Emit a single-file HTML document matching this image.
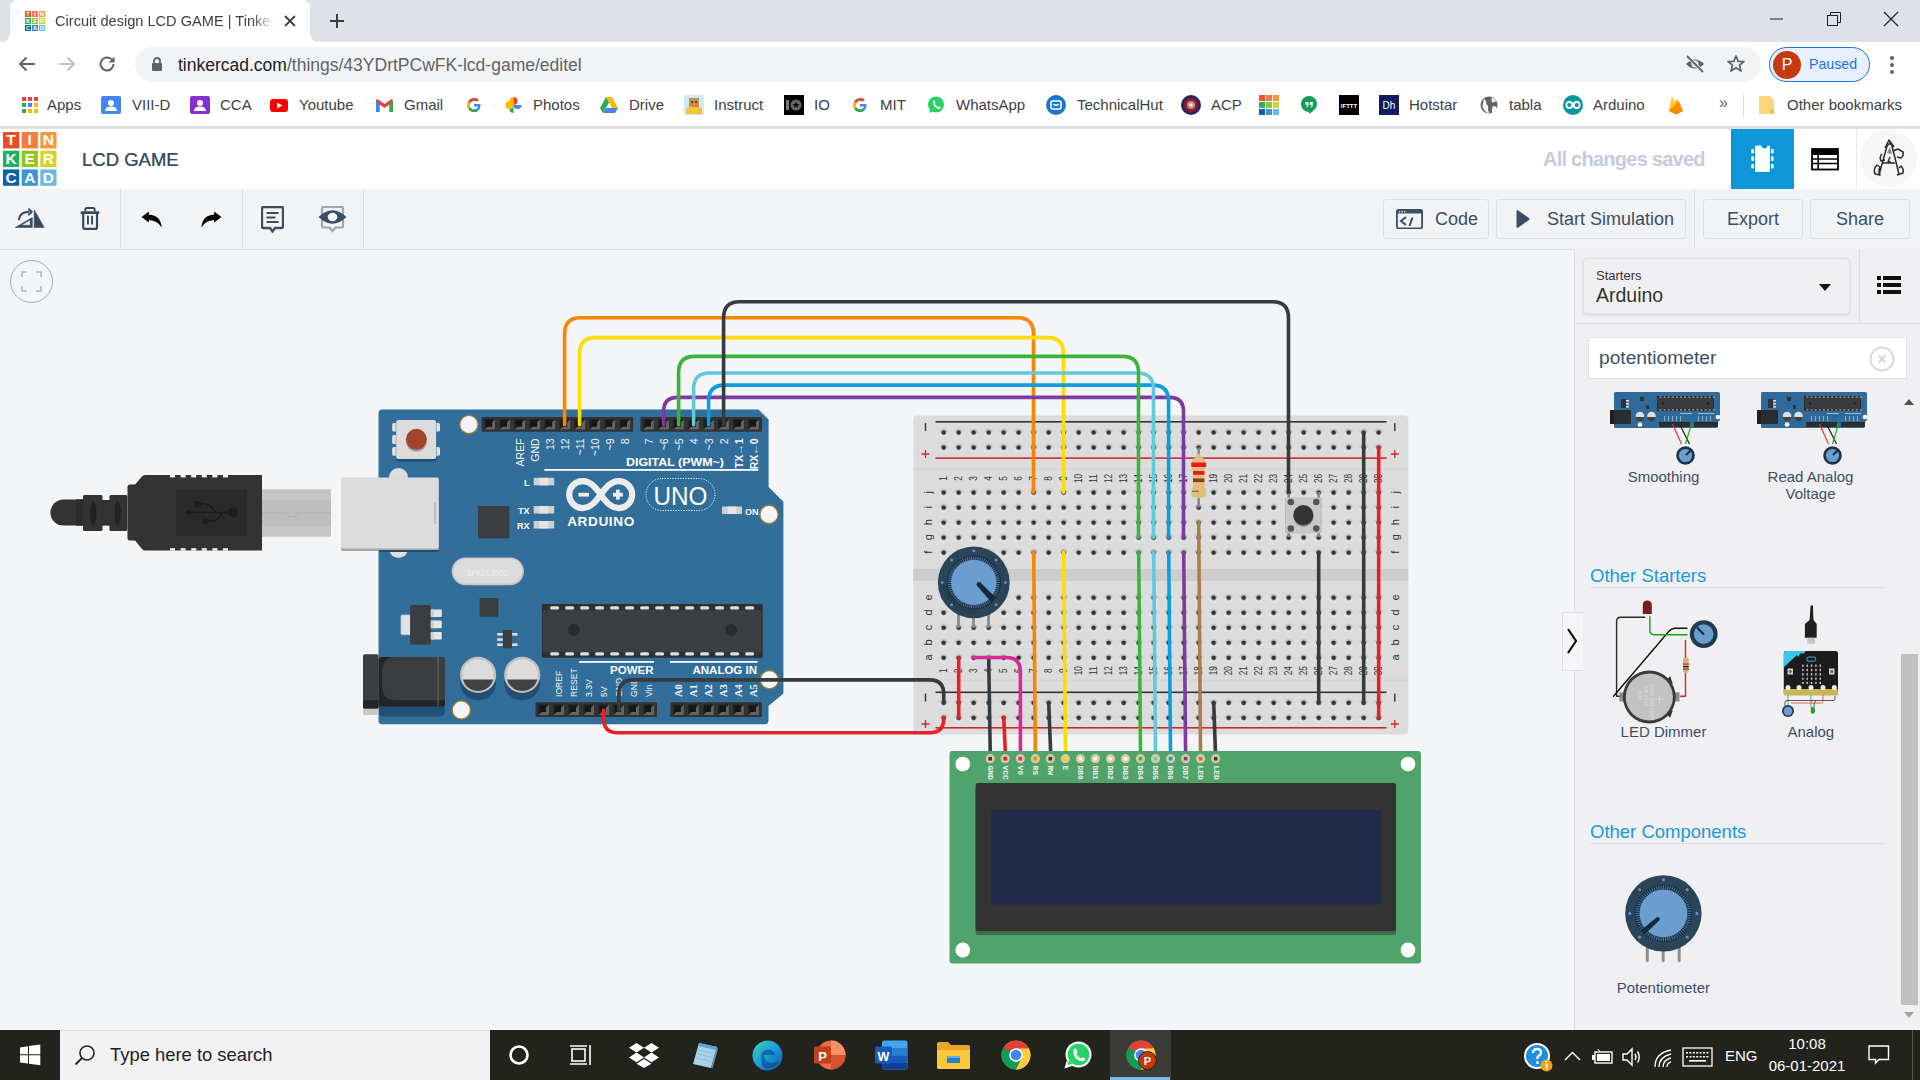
<!DOCTYPE html>
<html><head><meta charset="utf-8">
<style>
*{box-sizing:border-box}
html,body{margin:0;padding:0}
body{width:1920px;height:1080px;overflow:hidden;position:relative;font-family:"Liberation Sans",sans-serif;background:#f3f5f7;color:#3c4043}
.a{position:absolute}
.bm{position:absolute;top:86px;height:41px;display:flex;align-items:center;font-size:15px;color:#3c4043;white-space:nowrap}
.bm svg{margin-right:11px}
.tbtn{position:absolute;top:199px;height:40px;border:1px solid #dde0e4;border-radius:3px;background:#f2f3f5;font-size:18px;color:#3c4e63;display:flex;align-items:center;justify-content:center}
.sep{position:absolute;background:#dde1e6}
.lbl{position:absolute;font-size:15px;color:#3c4e63;text-align:center;white-space:nowrap}
.sh{position:absolute;font-size:18.5px;color:#1a9ad6;white-space:nowrap}
</style></head>
<body>
<!-- ===== Chrome tab strip ===== -->
<div class="a" style="left:0;top:0;width:1920px;height:42px;background:#dee1e6"></div>
<div class="a" style="left:10px;top:0;width:300px;height:42px;background:#fff;border-radius:8px 8px 0 0"></div>
<svg class="a" style="left:0;top:32px" width="330" height="10"><path d="M0 10 Q10 10 10 0 L10 10Z" fill="#fff"/><path d="M310 0 Q310 10 320 10 L310 10Z" fill="#fff"/></svg>
<svg class="a" style="left:25px;top:11px" width="20" height="20" viewBox="0 0 20 20"><rect x="0" y="0" width="6" height="6" fill="#f0502a"/><text x="3" y="5.2" font-size="5.5" font-weight="bold" fill="#fff" text-anchor="middle" font-family="Liberation Sans">T</text><rect x="7" y="0" width="6" height="6" fill="#f57b3b"/><text x="10" y="5.2" font-size="5.5" font-weight="bold" fill="#fff" text-anchor="middle" font-family="Liberation Sans">I</text><rect x="14" y="0" width="6" height="6" fill="#f8973e"/><text x="17" y="5.2" font-size="5.5" font-weight="bold" fill="#fff" text-anchor="middle" font-family="Liberation Sans">N</text><rect x="0" y="7" width="6" height="6" fill="#2bb35c"/><text x="3" y="12.2" font-size="5.5" font-weight="bold" fill="#fff" text-anchor="middle" font-family="Liberation Sans">K</text><rect x="7" y="7" width="6" height="6" fill="#8dc63f"/><text x="10" y="12.2" font-size="5.5" font-weight="bold" fill="#fff" text-anchor="middle" font-family="Liberation Sans">E</text><rect x="14" y="7" width="6" height="6" fill="#d0d437"/><text x="17" y="12.2" font-size="5.5" font-weight="bold" fill="#fff" text-anchor="middle" font-family="Liberation Sans">R</text><rect x="0" y="14" width="6" height="6" fill="#0c62ad"/><text x="3" y="19.2" font-size="5.5" font-weight="bold" fill="#fff" text-anchor="middle" font-family="Liberation Sans">C</text><rect x="7" y="14" width="6" height="6" fill="#3b95d1"/><text x="10" y="19.2" font-size="5.5" font-weight="bold" fill="#fff" text-anchor="middle" font-family="Liberation Sans">A</text><rect x="14" y="14" width="6" height="6" fill="#6ab7df"/><text x="17" y="19.2" font-size="5.5" font-weight="bold" fill="#fff" text-anchor="middle" font-family="Liberation Sans">D</text></svg>
<div class="a" style="left:55px;top:12.5px;font-size:14.6px;color:#3c4043;white-space:nowrap;width:219px;overflow:hidden;-webkit-mask-image:linear-gradient(90deg,#000 90%,transparent)">Circuit design LCD GAME | Tinkercad</div>
<svg class="a" style="left:283px;top:14px" width="14" height="14"><path d="M2 2L12 12M12 2L2 12" stroke="#3c4043" stroke-width="1.8"/></svg>
<svg class="a" style="left:329px;top:13px" width="16" height="16"><path d="M8 1V15M1 8H15" stroke="#3c4043" stroke-width="2"/></svg>
<!-- window controls -->
<svg class="a" style="left:1770px;top:12px" width="14" height="14"><path d="M0 7H13" stroke="#202124" stroke-width="1"/></svg>
<svg class="a" style="left:1826px;top:11px" width="16" height="16"><rect x="1.5" y="4.5" width="10" height="10" fill="none" stroke="#202124"/><path d="M4.5 4.5V1.5H14.5V11.5H11.5" fill="none" stroke="#202124"/></svg>
<svg class="a" style="left:1883px;top:11px" width="16" height="16"><path d="M1 1L15 15M15 1L1 15" stroke="#202124" stroke-width="1.2"/></svg>

<!-- ===== Chrome toolbar ===== -->
<div class="a" style="left:0;top:42px;width:1920px;height:44px;background:#fff"></div>
<svg class="a" style="left:17px;top:54px" width="20" height="20" viewBox="0 0 20 20"><path d="M18 10H3M9.5 3.5L3 10L9.5 16.5" fill="none" stroke="#5f6368" stroke-width="2"/></svg>
<svg class="a" style="left:57px;top:54px" width="20" height="20" viewBox="0 0 20 20"><path d="M2 10H17M10.5 3.5L17 10L10.5 16.5" fill="none" stroke="#bdc1c6" stroke-width="2"/></svg>
<svg class="a" style="left:97px;top:54px" width="20" height="20" viewBox="0 0 20 20"><path d="M16.5 10A6.5 6.5 0 1 1 14.6 5.4" fill="none" stroke="#5f6368" stroke-width="2"/><path d="M17.5 2.5V8.5H11.5Z" fill="#5f6368"/></svg>
<div class="a" style="left:135px;top:47px;width:1626px;height:35px;background:#f1f3f4;border-radius:18px"></div>
<svg class="a" style="left:151px;top:57px" width="12" height="15" viewBox="0 0 12 15"><path d="M3 6V4A3 3 0 0 1 9 4V6" fill="none" stroke="#5f6368" stroke-width="1.8"/><rect x="1" y="6" width="10" height="8" rx="1" fill="#5f6368"/></svg>
<div class="a" style="left:178px;top:55px;font-size:17.5px;white-space:nowrap;color:#202124">tinkercad.com<span style="color:#5f6368">/things/43YDrtPCwFK-lcd-game/editel</span></div>
<svg class="a" style="left:1684px;top:54px" width="22" height="20" viewBox="0 0 22 20"><path d="M2 10Q11 1 20 10Q11 19 2 10Z" fill="#5f6368"/><circle cx="11" cy="10" r="3.5" fill="#f1f3f4"/><circle cx="11" cy="10" r="2" fill="#5f6368"/><path d="M3 2L19 18" stroke="#f1f3f4" stroke-width="3.5"/><path d="M3 2L19 18" stroke="#5f6368" stroke-width="1.8"/></svg>
<svg class="a" style="left:1726px;top:54px" width="20" height="20" viewBox="0 0 20 20"><path d="M10 2L12.2 7.3L18 7.6L13.5 11.2L15 17L10 13.8L5 17L6.5 11.2L2 7.6L7.8 7.3Z" fill="none" stroke="#5f6368" stroke-width="1.7" stroke-linejoin="round"/></svg>
<div class="a" style="left:1769px;top:47px;width:101px;height:35px;border:1.5px solid #1a73e8;border-radius:18px;background:#e8f0fe"></div>
<div class="a" style="left:1773px;top:51px;width:28px;height:28px;border-radius:50%;background:#c5390f;color:#fff;font-size:16px;text-align:center;line-height:28px">P</div>
<div class="a" style="left:1809px;top:56px;font-size:14.2px;color:#1a73e8">Paused</div>
<svg class="a" style="left:1886px;top:55px" width="12" height="20"><circle cx="6" cy="3" r="2" fill="#5f6368"/><circle cx="6" cy="10" r="2" fill="#5f6368"/><circle cx="6" cy="17" r="2" fill="#5f6368"/></svg>

<!-- ===== Bookmarks bar ===== -->
<div class="a" style="left:0;top:86px;width:1920px;height:41px;background:#fff;border-bottom:1px solid #dadce0"></div>
<svg class="a" style="left:20px;top:95px" width="20" height="20" viewBox="0 0 20 20"><g><rect x="2" y="2" width="4" height="4" fill="#ea4335"/><rect x="8" y="2" width="4" height="4" fill="#ea4335"/><rect x="14" y="2" width="4" height="4" fill="#ea4335"/><rect x="2" y="8" width="4" height="4" fill="#34a853"/><rect x="8" y="8" width="4" height="4" fill="#4285f4"/><rect x="14" y="8" width="4" height="4" fill="#fbbc04"/><rect x="2" y="14" width="4" height="4" fill="#34a853"/><rect x="8" y="14" width="4" height="4" fill="#fbbc04"/><rect x="14" y="14" width="4" height="4" fill="#fbbc04"/></g></svg>
<div class="a" style="left:47px;top:96px;font-size:15px;color:#3c4043;white-space:nowrap">Apps</div>
<svg class="a" style="left:101px;top:95px" width="20" height="20" viewBox="0 0 20 20"><rect x="0" y="1" width="20" height="18" rx="2" fill="#4285f4"/><circle cx="10" cy="8" r="3" fill="#fff"/><path d="M4 16Q4 11.5 10 11.5Q16 11.5 16 16Z" fill="#fff"/></svg>
<div class="a" style="left:132px;top:96px;font-size:15px;color:#3c4043;white-space:nowrap">VIII-D</div>
<svg class="a" style="left:190px;top:95px" width="20" height="20" viewBox="0 0 20 20"><rect x="0" y="1" width="20" height="18" rx="2" fill="#8430ce"/><circle cx="10" cy="8" r="3" fill="#fff"/><path d="M4 16Q4 11.5 10 11.5Q16 11.5 16 16Z" fill="#fff"/></svg>
<div class="a" style="left:220px;top:96px;font-size:15px;color:#3c4043;white-space:nowrap">CCA</div>
<svg class="a" style="left:270px;top:95px" width="20" height="20" viewBox="0 0 20 20"><rect x="0" y="4" width="18" height="13" rx="3" fill="#ff0000"/><path d="M7 7.5L12.5 10.5L7 13.5Z" fill="#fff"/></svg>
<div class="a" style="left:299px;top:96px;font-size:15px;color:#3c4043;white-space:nowrap">Youtube</div>
<svg class="a" style="left:375px;top:95px" width="20" height="20" viewBox="0 0 20 20"><path d="M1 5V17H4.5V9.5L9.5 13L14.5 9.5V17H18V5L16.5 4L9.5 9L2.5 4Z" fill="#ea4335"/><path d="M1 5V17H4.5V9.5Z" fill="#4285f4"/><path d="M14.5 9.5V17H18V5Z" fill="#34a853"/></svg>
<div class="a" style="left:404px;top:96px;font-size:15px;color:#3c4043;white-space:nowrap">Gmail</div>
<svg class="a" style="left:465px;top:95px" width="20" height="20" viewBox="0 0 20 20"><path d="M15.5 9H9V11.5H13Q12.4 14.5 9 14.5A4.5 4.5 0 1 1 12 6.6L13.8 4.8A7 7 0 1 0 9 17Q15.7 17 15.5 9Z" fill="#4285f4"/><path d="M3.2 6.5L5.4 8.1A4.5 4.5 0 0 1 12 6.6L13.8 4.8A7 7 0 0 0 3.2 6.5Z" fill="#ea4335"/><path d="M3.2 6.5A7 7 0 0 0 3.3 14.1L5.4 12.4A4.5 4.5 0 0 1 5.4 8.1Z" fill="#fbbc04"/><path d="M3.3 14.1A7 7 0 0 0 13.5 15.5L11.6 13.8A4.5 4.5 0 0 1 5.4 12.4Z" fill="#34a853"/></svg>
<svg class="a" style="left:504px;top:95px" width="20" height="20" viewBox="0 0 20 20"><path d="M9.5 10V2A4 4 0 0 1 9.5 10Z" fill="#ea4335"/><path d="M9.5 10H1.5A4 4 0 0 1 9.5 10Z" fill="#fbbc04"/><path d="M9.5 10V18A4 4 0 0 1 9.5 10Z" fill="#34a853"/><path d="M9.5 10H17.5A4 4 0 0 1 9.5 10Z" fill="#4285f4"/><path d="M9.5 10L9.5 2A4 4 0 0 0 9.5 10ZM9.5 10H1.5A4 4 0 0 0 9.5 10Z" fill="#fbbc04"/></svg>
<div class="a" style="left:533px;top:96px;font-size:15px;color:#3c4043;white-space:nowrap">Photos</div>
<svg class="a" style="left:600px;top:95px" width="20" height="20" viewBox="0 0 20 20"><path d="M6 2H12L18 13H12Z" fill="#fbbc04"/><path d="M6 2L0 13L3 18L9 7.5Z" fill="#34a853"/><path d="M3 18H15L18 13H6Z" fill="#4285f4"/></svg>
<div class="a" style="left:629px;top:96px;font-size:15px;color:#3c4043;white-space:nowrap">Drive</div>
<svg class="a" style="left:684px;top:95px" width="20" height="20" viewBox="0 0 20 20"><rect x="0" y="0" width="20" height="20" rx="2" fill="#cfe8f5"/><path d="M2 15Q2 12 6 12H14Q18 12 18 15V19H2Z" fill="#f9c23c"/><rect x="5" y="3" width="10" height="9" fill="#c98a4b"/><circle cx="8" cy="7" r="1" fill="#333"/><circle cx="12" cy="7" r="1" fill="#333"/></svg>
<div class="a" style="left:714px;top:96px;font-size:15px;color:#3c4043;white-space:nowrap">Instruct</div>
<svg class="a" style="left:784px;top:95px" width="20" height="20" viewBox="0 0 20 20"><rect x="0" y="0" width="20" height="20" fill="#000"/><circle cx="12" cy="10" r="5.5" fill="#666"/><path d="M12 6.5L13 9H15.5L13.5 10.5L14.3 13L12 11.5L9.7 13L10.5 10.5L8.5 9H11Z" fill="#000"/><rect x="2" y="5" width="3" height="10" fill="#777"/></svg>
<div class="a" style="left:814px;top:96px;font-size:15px;color:#3c4043;white-space:nowrap">IO</div>
<svg class="a" style="left:851px;top:95px" width="20" height="20" viewBox="0 0 20 20"><path d="M15.5 9H9V11.5H13Q12.4 14.5 9 14.5A4.5 4.5 0 1 1 12 6.6L13.8 4.8A7 7 0 1 0 9 17Q15.7 17 15.5 9Z" fill="#4285f4"/><path d="M3.2 6.5L5.4 8.1A4.5 4.5 0 0 1 12 6.6L13.8 4.8A7 7 0 0 0 3.2 6.5Z" fill="#ea4335"/><path d="M3.2 6.5A7 7 0 0 0 3.3 14.1L5.4 12.4A4.5 4.5 0 0 1 5.4 8.1Z" fill="#fbbc04"/><path d="M3.3 14.1A7 7 0 0 0 13.5 15.5L11.6 13.8A4.5 4.5 0 0 1 5.4 12.4Z" fill="#34a853"/></svg>
<div class="a" style="left:880px;top:96px;font-size:15px;color:#3c4043;white-space:nowrap">MIT</div>
<svg class="a" style="left:927px;top:95px" width="20" height="20" viewBox="0 0 20 20"><circle cx="9" cy="9.5" r="8" fill="#25d366"/><path d="M2 18L3.2 13.5L6 16Z" fill="#25d366"/><path d="M6 6Q6.5 5 7.5 5.5L8.5 7.5Q8 8.5 7.8 9Q9 11 11 12Q11.6 11.6 12.2 11.2L13.8 12.3Q13.8 13.6 12.5 14Q10 14 8 12Q6 10 6 6Z" fill="#fff"/></svg>
<div class="a" style="left:956px;top:96px;font-size:15px;color:#3c4043;white-space:nowrap">WhatsApp</div>
<svg class="a" style="left:1046px;top:95px" width="20" height="20" viewBox="0 0 20 20"><circle cx="10" cy="10" r="10" fill="#1976d2"/><rect x="5" y="6" width="10" height="8" rx="1.5" fill="none" stroke="#fff" stroke-width="1.6"/><path d="M7.5 9Q10 11.5 12.5 9" fill="none" stroke="#fff" stroke-width="1.5"/></svg>
<div class="a" style="left:1077px;top:96px;font-size:15px;color:#3c4043;white-space:nowrap">TechnicalHut</div>
<svg class="a" style="left:1181px;top:95px" width="20" height="20" viewBox="0 0 20 20"><circle cx="10" cy="10" r="10" fill="#2a2560"/><circle cx="10" cy="10" r="7" fill="#8b1d2c"/><circle cx="10" cy="10" r="4" fill="#c9897e"/><circle cx="10" cy="10" r="1.8" fill="#eee"/></svg>
<div class="a" style="left:1211px;top:96px;font-size:15px;color:#3c4043;white-space:nowrap">ACP</div>
<svg class="a" style="left:1259px;top:95px" width="20" height="20" viewBox="0 0 20 20"><rect x="0" y="0" width="6" height="6" fill="#f0532b"/><rect x="7" y="0" width="6" height="6" fill="#f47b3c"/><rect x="14" y="0" width="6" height="6" fill="#f79a3e"/><rect x="0" y="7" width="6" height="6" fill="#2fb25b"/><rect x="7" y="7" width="6" height="6" fill="#8cc63f"/><rect x="14" y="7" width="6" height="6" fill="#cdd43a"/><rect x="0" y="14" width="6" height="6" fill="#0f62ae"/><rect x="7" y="14" width="6" height="6" fill="#3c96d2"/><rect x="14" y="14" width="6" height="6" fill="#6cb8e0"/></svg>
<svg class="a" style="left:1300px;top:95px" width="20" height="20" viewBox="0 0 20 20"><path d="M9 1A8 8 0 0 1 17 9Q17 14 9 19V17A8 8 0 0 1 9 1Z" fill="#0f9d58"/><path d="M5.5 7H8.5V10Q8.5 12 6.5 12.5V11.2Q7.5 10.8 7.5 10H5.5ZM9.8 7H12.8V10Q12.8 12 10.8 12.5V11.2Q11.8 10.8 11.8 10H9.8Z" fill="#fff"/></svg>
<svg class="a" style="left:1339px;top:95px" width="20" height="20" viewBox="0 0 20 20"><rect x="0" y="0" width="20" height="20" fill="#000"/><text x="10" y="12.5" font-size="6" font-weight="bold" fill="#fff" text-anchor="middle" font-family="Liberation Sans">IFTTT</text></svg>
<svg class="a" style="left:1379px;top:95px" width="20" height="20" viewBox="0 0 20 20"><rect x="0" y="0" width="20" height="20" fill="#0f1c5c"/><text x="10" y="14" font-size="10" fill="#fff" text-anchor="middle" font-family="Liberation Sans">Dh</text></svg>
<div class="a" style="left:1409px;top:96px;font-size:15px;color:#3c4043;white-space:nowrap">Hotstar</div>
<svg class="a" style="left:1480px;top:95px" width="20" height="20" viewBox="0 0 20 20"><circle cx="9" cy="10" r="8.5" fill="#5f6368"/><path d="M4 4Q7 6 6 9Q9 11 8 14L9 18.5Q5 17 2.5 12Q3 7 4 4ZM12 2.5Q15 4 16 6Q14 8 12 7Q11 5 12 2.5ZM13 11Q16 11 17 13Q15 17 12 18Q11 14 13 11Z" fill="#fff"/></svg>
<div class="a" style="left:1509px;top:96px;font-size:15px;color:#3c4043;white-space:nowrap">tabla</div>
<svg class="a" style="left:1563px;top:95px" width="20" height="20" viewBox="0 0 20 20"><circle cx="10" cy="10" r="10" fill="#00979c"/><circle cx="6.3" cy="10" r="3" fill="none" stroke="#fff" stroke-width="1.8"/><circle cx="13.7" cy="10" r="3" fill="none" stroke="#fff" stroke-width="1.8"/></svg>
<div class="a" style="left:1593px;top:96px;font-size:15px;color:#3c4043;white-space:nowrap">Arduino</div>
<svg class="a" style="left:1668px;top:95px" width="20" height="20" viewBox="0 0 20 20"><path d="M1 16L4 2L7 8L9 4L15 16L8 19.5Z" fill="#ffa000"/><path d="M1 16L4 2L8 9Z" fill="#ffca28"/><path d="M1 16L11 6L15 16L8 19.5Z" fill="#f57c00" opacity="0.6"/></svg>
<div class="a" style="left:1719px;top:94px;font-size:16px;color:#5f6368">&raquo;</div>
<div class="a" style="left:1743px;top:94px;width:1px;height:24px;background:#dadce0"></div>
<svg class="a" style="left:1758px;top:95px" width="18" height="20" viewBox="0 0 18 20"><path d="M1 1H12L16 5V19H1Z" fill="#fbd77a"/><path d="M12 14H16V19H12Z" fill="#f1c04f"/></svg>
<div class="a" style="left:1787px;top:96px;font-size:15px;color:#3c4043;white-space:nowrap">Other bookmarks</div>

<!-- ===== Tinkercad header ===== -->
<div class="a" style="left:0;top:127px;width:1920px;height:1px;background:#dcdfe3"></div><div class="a" style="left:0;top:128px;width:1920px;height:1px;background:#e4e6e9"></div>
<div class="a" style="left:0;top:129px;width:1920px;height:60px;background:#fff;box-shadow:0 1px 3px rgba(0,0,0,0.08)"></div>
<svg class="a" style="left:3px;top:132px" width="54" height="54" viewBox="0 0 54 54"><rect x="0.00" y="0.00" width="16.2" height="16.4" fill="#f04a24"/><text x="8.10" y="13.30" font-size="15.5" font-weight="bold" fill="#fff" text-anchor="middle" font-family="Liberation Sans">T</text><rect x="18.65" y="0.00" width="16.2" height="16.4" fill="#f87a3c"/><text x="26.75" y="13.30" font-size="15.5" font-weight="bold" fill="#fff" text-anchor="middle" font-family="Liberation Sans">I</text><rect x="37.30" y="0.00" width="16.2" height="16.4" fill="#f9973a"/><text x="45.40" y="13.30" font-size="15.5" font-weight="bold" fill="#fff" text-anchor="middle" font-family="Liberation Sans">N</text><rect x="0.00" y="18.70" width="16.2" height="16.4" fill="#20b25a"/><text x="8.10" y="32.00" font-size="15.5" font-weight="bold" fill="#fff" text-anchor="middle" font-family="Liberation Sans">K</text><rect x="18.65" y="18.70" width="16.2" height="16.4" fill="#8ec813"/><text x="26.75" y="32.00" font-size="15.5" font-weight="bold" fill="#fff" text-anchor="middle" font-family="Liberation Sans">E</text><rect x="37.30" y="18.70" width="16.2" height="16.4" fill="#d3d42a"/><text x="45.40" y="32.00" font-size="15.5" font-weight="bold" fill="#fff" text-anchor="middle" font-family="Liberation Sans">R</text><rect x="0.00" y="37.40" width="16.2" height="16.4" fill="#0b5fb0"/><text x="8.10" y="50.70" font-size="15.5" font-weight="bold" fill="#fff" text-anchor="middle" font-family="Liberation Sans">C</text><rect x="18.65" y="37.40" width="16.2" height="16.4" fill="#3d96d0"/><text x="26.75" y="50.70" font-size="15.5" font-weight="bold" fill="#fff" text-anchor="middle" font-family="Liberation Sans">A</text><rect x="37.30" y="37.40" width="16.2" height="16.4" fill="#6cb8de"/><text x="45.40" y="50.70" font-size="15.5" font-weight="bold" fill="#fff" text-anchor="middle" font-family="Liberation Sans">D</text></svg><div class="a" style="left:82px;top:149px;font-size:18.5px;color:#3c4e63">LCD GAME</div>
<div class="a" style="left:82px;top:149px;font-size:18.5px;color:#3c4e63">LCD GAME</div>
<div class="a" style="left:1543px;top:148px;font-size:20px;font-weight:bold;color:#c3ccd8;letter-spacing:-0.75px">All changes saved</div>
<div class="a" style="left:1731px;top:129px;width:63px;height:60px;background:#0d96d8"></div>
<div class="a" style="left:1856px;top:129px;width:1px;height:60px;background:#e6e8eb"></div>
<svg class="a" style="left:1750px;top:145px" width="25" height="28" viewBox="0 0 25 28"><path d="M7.5 0.5H11.5A3 3 0 0 0 17.5 0.5H18.5Q20 0.5 20 2V25.5Q20 27 18.5 27H6.5Q5 27 5 25.5V2Q5 0.5 6.5 0.5Z" fill="#fff"/><g fill="#fff"><rect x="1.3" y="4" width="2.6" height="4.6" rx="0.8"/><rect x="1.3" y="11.3" width="2.6" height="4.6" rx="0.8"/><rect x="1.3" y="19" width="2.6" height="4.6" rx="0.8"/><rect x="21" y="4" width="2.6" height="4.6" rx="0.8"/><rect x="21" y="11.3" width="2.6" height="4.6" rx="0.8"/><rect x="21" y="19" width="2.6" height="4.6" rx="0.8"/></g></svg>
<svg class="a" style="left:1811px;top:148px" width="28" height="23" viewBox="0 0 28 23"><rect x="1" y="1" width="26" height="20.5" fill="none" stroke="#000" stroke-width="1.8"/><rect x="1" y="1" width="26" height="6" fill="#000"/><path d="M1 11H27M1 15.5H27M7.2 7V21.5" stroke="#000" stroke-width="1.6"/></svg>
<div class="a" style="left:1860px;top:130px;width:57px;height:57px;border-radius:50%;background:#f6f6f6"></div>
<svg class="a" style="left:1870px;top:139px" width="38" height="39" viewBox="0 0 38 39"><g fill="none" stroke="#2a2a2a" stroke-width="1.5" stroke-linejoin="round"><path d="M9 36L17 7L20 4L22 7L29 35M13 24H25"/><path d="M5 35Q3 30 7 26L10 28Q8 32 10 36Z"/><path d="M27 36L33 34Q34 30 31 27L29 29"/><path d="M23 12L28 10L33 13Q34 17 31 19L27 18"/><path d="M12 15Q9 18 11 22L15 21M20 18L18 23H21"/><path d="M15 9L19 1L24 8"/></g><path d="M17 14L20 8L22 15Z" fill="#888"/></svg>

<!-- ===== Tinkercad toolbar ===== -->
<div class="a" style="left:0;top:189px;width:1920px;height:61px;background:#f2f3f5;border-bottom:1px solid #dfe2e6"></div>
<div class="sep" style="left:120px;top:189px;width:1px;height:60px"></div>
<div class="sep" style="left:242px;top:189px;width:1px;height:60px"></div>
<div class="sep" style="left:363px;top:189px;width:1px;height:60px"></div>
<div class="sep" style="left:1694px;top:189px;width:1px;height:60px"></div>
<div class="tbtn" style="left:1383px;width:106px"></div>
<div class="a" style="left:1435px;top:209px;font-size:18px;color:#3c4e63">Code</div>
<div class="tbtn" style="left:1496px;width:190px"></div>
<div class="a" style="left:1547px;top:209px;font-size:18px;color:#3c4e63">Start Simulation</div>
<div class="tbtn" style="left:1703px;width:100px">Export</div>
<div class="tbtn" style="left:1810px;width:100px">Share</div>

<svg class="a" style="left:0;top:200px" width="110" height="40" viewBox="0 200 110 40"><path d="M15.3 227.4L32.3 217.6V227.4ZM21 225.3H30.2V220Z" fill="#34495f" fill-rule="evenodd" stroke="#34495f" stroke-width="0.6" stroke-linejoin="round"/><path d="M34.2 209.9V227.4H44.2Z" fill="#34495f" stroke="#34495f" stroke-width="0.6" stroke-linejoin="round"/><path d="M19 219.5Q19.5 212.5 28.5 211.7" fill="none" stroke="#34495f" stroke-width="2" stroke-linecap="round"/><path d="M29 209.3L31.7 211.8L28.8 214.4" fill="none" stroke="#34495f" stroke-width="2" stroke-linecap="round" stroke-linejoin="round"/>
<path d="M85.3 211.3V209.6Q85.3 208 87 208H93Q94.7 208 94.7 209.6V211.3" fill="none" stroke="#34495f" stroke-width="1.9"/><rect x="80.6" y="211.2" width="18.8" height="2.8" rx="1" fill="#34495f"/><path d="M83.2 213.8V227.2Q83.2 228.9 85 228.9H95.2Q97 228.9 97 227.2V213.8" fill="none" stroke="#34495f" stroke-width="2.2"/><rect x="87" y="215.4" width="1.9" height="9.2" rx="0.9" fill="#34495f"/><rect x="91.1" y="215.4" width="1.9" height="9.2" rx="0.9" fill="#34495f"/></svg>
<svg class="a" style="left:141px;top:211px" width="21" height="17" viewBox="0 0 21 17"><path d="M0.5 6L8 0.5V3.8Q20 4.5 20.5 16.5Q17 9.5 8 9V11.5Z" fill="#000"/></svg>
<svg class="a" style="left:201px;top:211px" width="21" height="17" viewBox="0 0 21 17"><path d="M20.5 6L13 0.5V3.8Q1 4.5 0.5 16.5Q4 9.5 13 9V11.5Z" fill="#000"/></svg>
<svg class="a" style="left:261px;top:206px" width="23" height="27" viewBox="0 0 23 27"><path d="M2.5 1H20.5Q22 1 22 2.5V20.5Q22 22 20.5 22H14L11.5 25.5L9 22H2.5Q1 22 1 20.5V2.5Q1 1 2.5 1Z" fill="none" stroke="#3c4e63" stroke-width="2.3"/><rect x="5.5" y="6" width="12" height="2" fill="#3c4e63"/><rect x="5.5" y="10.5" width="9" height="2" fill="#3c4e63"/><rect x="5.5" y="15" width="12" height="2" fill="#3c4e63"/></svg>
<svg class="a" style="left:318px;top:206px" width="29" height="27" viewBox="0 0 29 27"><path d="M5.5 1H23.5Q25 1 25 2.5V20Q25 21.5 23.5 21.5H17.5L14.5 25L11.5 21.5H5.5Q4 21.5 4 20V2.5Q4 1 5.5 1Z" fill="none" stroke="#9ba7b4" stroke-width="2.2"/><path d="M0.5 11Q14.5 -2.5 28.5 11Q14.5 24.5 0.5 11Z" fill="#3c4e63"/><ellipse cx="14.5" cy="11" rx="4.8" ry="4.2" fill="#f2f3f5"/></svg>
<svg class="a" style="left:1396px;top:209px" width="27" height="20" viewBox="0 0 27 20"><rect x="0.9" y="0.9" width="25.2" height="18.4" rx="1.5" fill="none" stroke="#3c4e63" stroke-width="1.8"/><rect x="0.9" y="0.9" width="25.2" height="3.6" fill="#3c4e63"/><circle cx="3.6" cy="2.7" r="0.8" fill="#f2f3f5"/><circle cx="6.2" cy="2.7" r="0.8" fill="#f2f3f5"/><circle cx="8.8" cy="2.7" r="0.8" fill="#f2f3f5"/><path d="M10 8L5 12L10 16M16.5 8.5L13.5 17" fill="none" stroke="#3c4e63" stroke-width="2"/></svg>
<svg class="a" style="left:1515px;top:209px" width="16" height="20" viewBox="0 0 16 20"><path d="M1.5 2.5Q1.5 0.5 3.3 1.6L14 9Q15 10 14 11L3.3 18.4Q1.5 19.5 1.5 17.5Z" fill="#3c4e63"/></svg>
<svg class="a" style="left:0;top:249px" width="1574" height="781" viewBox="0 249 1574 781"><circle cx="31.5" cy="281.5" r="21" fill="none" stroke="#a8acb1" stroke-width="1"/>
<path d="M22 277V272H27M36 272H41V277M41 286V291H36M27 291H22V286" fill="none" stroke="#b4b8bd" stroke-width="1.6"/>
<path d="M63.5 499.4H83V525.6H63.5A13.1 13.1 0 0 1 63.5 499.4Z" fill="#333"/><rect x="76" y="499.4" width="7" height="26.2" fill="#2c2c2c"/>
<rect x="83" y="495" width="19.5" height="36" rx="1.5" fill="#333"/><rect x="109.4" y="495" width="18" height="36" rx="1.5" fill="#333"/>
<rect x="102" y="500" width="8" height="25.6" fill="#2e2e2e"/><rect x="102" y="503" width="8" height="19" fill="#333"/>
<ellipse cx="93.3" cy="513" rx="3.2" ry="12" fill="#222"/><ellipse cx="117.7" cy="513" rx="3.2" ry="12" fill="#222"/>
<path d="M127.5 487Q127.5 484.5 130 484.5H135L142 476.5Q143.5 475 145 475H262V550.6H145Q143.5 550.6 142 549L135 540.5H130Q127.5 540.5 127.5 538Z" fill="#333"/>
<rect x="170.0" y="475" width="5" height="2.4" fill="#f3f5f7"/><rect x="170.0" y="548.2" width="5" height="2.4" fill="#f3f5f7"/>
<rect x="180.6" y="475" width="5" height="2.4" fill="#f3f5f7"/><rect x="180.6" y="548.2" width="5" height="2.4" fill="#f3f5f7"/>
<rect x="191.2" y="475" width="5" height="2.4" fill="#f3f5f7"/><rect x="191.2" y="548.2" width="5" height="2.4" fill="#f3f5f7"/>
<rect x="201.8" y="475" width="5" height="2.4" fill="#f3f5f7"/><rect x="201.8" y="548.2" width="5" height="2.4" fill="#f3f5f7"/>
<rect x="212.4" y="475" width="5" height="2.4" fill="#f3f5f7"/><rect x="212.4" y="548.2" width="5" height="2.4" fill="#f3f5f7"/>
<rect x="223.0" y="475" width="5" height="2.4" fill="#f3f5f7"/><rect x="223.0" y="548.2" width="5" height="2.4" fill="#f3f5f7"/>
<rect x="176" y="490" width="71" height="46" fill="#2a2a2a"/>
<g fill="#1c1c1c" stroke="#1c1c1c"><path d="M189 512.5H232" stroke-width="1.7" fill="none"/><path d="M184.4 512.5L190.6 509.6V515.4Z" stroke="none"/><circle cx="232.7" cy="512.5" r="5" stroke="none"/><path d="M215.5 512.5Q210 503.8 205 503.8H199" fill="none" stroke-width="1.7"/><rect x="195" y="501.2" width="6.2" height="6.2" stroke="none"/><path d="M222.5 512.5Q217 521.2 212 521.2H205" fill="none" stroke-width="1.7"/><circle cx="205.6" cy="521.2" r="3.1" stroke="none"/></g>
<rect x="262" y="489.2" width="69" height="47.5" rx="1" fill="#c6c6c6"/><rect x="262" y="499.6" width="69" height="26.4" fill="#bebebe"/>
<path d="M262 513H287.7L288.6 516.5H295.7L296.6 513H331" fill="none" stroke="#acacac" stroke-width="0.9"/>
<path d="M382 409.5H758.5L768.6 419.5V487L783.4 501.7V693.5L768.5 706V720.5Q768.5 724.2 764.5 724.2H382Q378.5 724.2 378.5 720.5V413Q378.5 409.5 382 409.5Z" fill="#316e9a"/>
<rect x="389" y="468" width="19" height="20" rx="9.5" fill="#dedede"/><rect x="389" y="538" width="19" height="20" rx="9.5" fill="#dedede"/>
<rect x="341" y="479" width="97.7" height="72" rx="1.5" fill="#aaaaaa"/><rect x="379" y="550" width="59.7" height="2" fill="#234f74"/>
<rect x="341" y="477.6" width="97.7" height="71" rx="1.5" fill="#dcdcdc"/>
<rect x="434.5" y="502" width="1" height="22" fill="#9a9a9a"/>
<rect x="392.2" y="423" width="5" height="8.6" rx="1.6" fill="#e4e2de"/>
<rect x="392.2" y="435" width="5" height="9.0" rx="1.6" fill="#e4e2de"/>
<rect x="392.2" y="447.1" width="5" height="8.6" rx="1.6" fill="#e4e2de"/>
<rect x="435" y="423" width="5" height="8.6" rx="1.6" fill="#e4e2de"/>
<rect x="435" y="447.1" width="5" height="8.6" rx="1.6" fill="#e4e2de"/>
<rect x="396.2" y="421.5" width="39.9" height="40" rx="2.5" fill="#234d70"/>
<rect x="395.8" y="420" width="40.6" height="38.9" rx="2.5" fill="#316e9a"/><rect x="396.2" y="420" width="39.9" height="38.9" rx="2.5" fill="#dcdcdc"/>
<circle cx="416.4" cy="441.3" r="10.46" fill="#a0a0a0"/><circle cx="416.4" cy="439.3" r="10.46" fill="#a3452d"/>
<circle cx="468.9" cy="424.6" r="9.2" fill="#f4f5f7" stroke="#8f7d3a" stroke-width="1.4"/>
<circle cx="769" cy="514.5" r="9.2" fill="#f4f5f7" stroke="#8f7d3a" stroke-width="1.4"/>
<circle cx="769.4" cy="679.7" r="9.2" fill="#f4f5f7" stroke="#8f7d3a" stroke-width="1.4"/>
<circle cx="461.3" cy="709.9" r="9.2" fill="#f4f5f7" stroke="#8f7d3a" stroke-width="1.4"/>
<rect x="478" y="506" width="31.3" height="32.3" rx="1" fill="#3b3e41"/>
<rect x="533.7" y="477.8" width="20.5" height="7.5" fill="#cfcfcf"/><rect x="539.4" y="477.8" width="9.0" height="7.5" fill="#e4e4e4"/>
<rect x="533.7" y="506" width="20.5" height="7.5" fill="#cfcfcf"/><rect x="539.4" y="506" width="9.0" height="7.5" fill="#e4e4e4"/>
<rect x="533.7" y="521" width="20.5" height="7.5" fill="#cfcfcf"/><rect x="539.4" y="521" width="9.0" height="7.5" fill="#e4e4e4"/>
<rect x="722" y="506.5" width="20" height="7.5" fill="#cfcfcf"/><rect x="727.6" y="506.5" width="8.8" height="7.5" fill="#e4e4e4"/>
<g fill="#fff" font-family="Liberation Sans" font-weight="bold" font-size="9"><text x="529.5" y="485.5" text-anchor="end">L</text><text x="529.5" y="514" text-anchor="end">TX</text><text x="529.5" y="528.5" text-anchor="end">RX</text><text x="745" y="514.5">ON</text></g>
<path d="M600.7 494.6C595.5 487.5 590.5 481.1 582.7 481.1A13.5 13.5 0 0 0 582.7 508.1C590.5 508.1 595.5 501.7 600.7 494.6C605.9 487.5 610.9 481.1 618.7 481.1A13.5 13.5 0 0 1 618.7 508.1C610.9 508.1 605.9 501.7 600.7 494.6Z" fill="none" stroke="#ececec" stroke-width="6.2"/>
<rect x="578.5" y="492.8" width="10.5" height="3.8" fill="#ececec"/><rect x="612.9" y="492.8" width="10" height="3.8" fill="#ececec"/><rect x="616" y="489.6" width="3.8" height="10" fill="#ececec"/>
<text x="601" y="525.5" text-anchor="middle" font-family="Liberation Sans" font-weight="bold" font-size="13.6" fill="#fff" letter-spacing="0.6">ARDUINO</text>
<rect x="646" y="478.5" width="69" height="32" rx="16" fill="none" stroke="#fff" stroke-width="1" stroke-dasharray="1.2 1.4"/>
<text x="680.5" y="505" text-anchor="middle" font-family="Liberation Sans" font-size="26" fill="#fff" textLength="54" lengthAdjust="spacingAndGlyphs">UNO</text>
<rect x="544.3" y="469" width="214" height="1.8" fill="#fff"/>
<text x="626" y="465.5" font-family="Liberation Sans" font-weight="bold" font-size="11.5" fill="#fff" textLength="98" lengthAdjust="spacingAndGlyphs">DIGITAL (PWM~)</text>
<rect x="451.7" y="557.4" width="72.2" height="27.8" rx="13.9" fill="#c9c9c9"/><rect x="453.5" y="558.8" width="68.6" height="24.6" rx="12.3" fill="#dcdcdc"/>
<text x="487.8" y="575.5" text-anchor="middle" font-family="Liberation Sans" font-size="9" fill="#f0f0f0" textLength="42" lengthAdjust="spacingAndGlyphs">SPK16.000G</text>
<rect x="401" y="615" width="10" height="19.7" rx="1.2" fill="#e2e2e2" stroke="#c9c9c9" stroke-width="0.8"/>
<rect x="410.1" y="604.9" width="20.7" height="39.5" rx="1.5" fill="#3b3e41"/>
<rect x="430.8" y="609.4" width="11" height="7.6" rx="1" fill="#e6e6e6"/><rect x="430.8" y="609.4" width="3" height="7.6" fill="#cfcfcf"/>
<rect x="430.8" y="620.6" width="11" height="7.6" rx="1" fill="#e6e6e6"/><rect x="430.8" y="620.6" width="3" height="7.6" fill="#cfcfcf"/>
<rect x="430.8" y="632" width="11" height="7.6" rx="1" fill="#e6e6e6"/><rect x="430.8" y="632" width="3" height="7.6" fill="#cfcfcf"/>
<rect x="479.6" y="598" width="18.8" height="18.8" rx="1" fill="#3b3e41"/>
<rect x="497.2" y="633" width="6" height="2.6" fill="#e0e0e0"/>
<rect x="497.2" y="638.3" width="6" height="2.6" fill="#e0e0e0"/>
<rect x="497.2" y="643.4" width="6" height="2.6" fill="#e0e0e0"/>
<rect x="511.5" y="633" width="6" height="2.6" fill="#e0e0e0"/>
<rect x="511.5" y="643.4" width="6" height="2.6" fill="#e0e0e0"/>
<rect x="502.8" y="629.9" width="9.3" height="18.4" rx="1" fill="#3b3e41"/>
<circle cx="478.1" cy="682.4" r="18.1" fill="#234f74"/>
<circle cx="478.1" cy="674.9" r="18.1" fill="#c2c2c2"/><circle cx="478.1" cy="674.9" r="15.6" fill="#dcdcdc"/>
<path d="M463.0 679.4H493.2A15.6 15.6 0 0 1 463.0 679.4Z" fill="#434343"/>
<circle cx="522.2" cy="682.4" r="18.1" fill="#234f74"/>
<circle cx="522.2" cy="674.9" r="18.1" fill="#c2c2c2"/><circle cx="522.2" cy="674.9" r="15.6" fill="#dcdcdc"/>
<path d="M507.1 679.4H537.3A15.6 15.6 0 0 1 507.1 679.4Z" fill="#434343"/>
<rect x="378.6" y="662" width="66.4" height="54.4" rx="5" fill="#234f74"/>
<rect x="363" y="700" width="15.6" height="15" rx="2" fill="#c8c8c8"/>
<rect x="363" y="654.2" width="15.6" height="54.4" rx="2" fill="#3b3e41"/><rect x="363" y="700.2" width="15.6" height="8.4" rx="1.5" fill="#232425"/>
<rect x="378.6" y="657" width="66.4" height="49.6" rx="3" fill="#232425"/>
<path d="M382.2 672Q382.2 657 395 657H442Q445 657 445 660V700.2H396Q382.2 700.2 382.2 686Z" fill="#3b3e41"/>
<rect x="437.6" y="657" width="0.9" height="49.6" fill="#6a6c6e"/>
<rect x="541.9" y="603.9" width="220.9" height="53.9" rx="1.5" fill="#2f3133"/><rect x="543" y="610" width="218.5" height="42" rx="2" fill="#3c3f42"/>
<rect x="550.1" y="606.3" width="9" height="3.2" rx="1.5" fill="#e0e0e0"/><rect x="550.1" y="652.2" width="9" height="3.2" rx="1.5" fill="#e0e0e0"/>
<rect x="565.1" y="606.3" width="9" height="3.2" rx="1.5" fill="#e0e0e0"/><rect x="565.1" y="652.2" width="9" height="3.2" rx="1.5" fill="#e0e0e0"/>
<rect x="580.1" y="606.3" width="9" height="3.2" rx="1.5" fill="#e0e0e0"/><rect x="580.1" y="652.2" width="9" height="3.2" rx="1.5" fill="#e0e0e0"/>
<rect x="595.1" y="606.3" width="9" height="3.2" rx="1.5" fill="#e0e0e0"/><rect x="595.1" y="652.2" width="9" height="3.2" rx="1.5" fill="#e0e0e0"/>
<rect x="610.1" y="606.3" width="9" height="3.2" rx="1.5" fill="#e0e0e0"/><rect x="610.1" y="652.2" width="9" height="3.2" rx="1.5" fill="#e0e0e0"/>
<rect x="625.1" y="606.3" width="9" height="3.2" rx="1.5" fill="#e0e0e0"/><rect x="625.1" y="652.2" width="9" height="3.2" rx="1.5" fill="#e0e0e0"/>
<rect x="640.1" y="606.3" width="9" height="3.2" rx="1.5" fill="#e0e0e0"/><rect x="640.1" y="652.2" width="9" height="3.2" rx="1.5" fill="#e0e0e0"/>
<rect x="655.1" y="606.3" width="9" height="3.2" rx="1.5" fill="#e0e0e0"/><rect x="655.1" y="652.2" width="9" height="3.2" rx="1.5" fill="#e0e0e0"/>
<rect x="670.1" y="606.3" width="9" height="3.2" rx="1.5" fill="#e0e0e0"/><rect x="670.1" y="652.2" width="9" height="3.2" rx="1.5" fill="#e0e0e0"/>
<rect x="685.1" y="606.3" width="9" height="3.2" rx="1.5" fill="#e0e0e0"/><rect x="685.1" y="652.2" width="9" height="3.2" rx="1.5" fill="#e0e0e0"/>
<rect x="700.1" y="606.3" width="9" height="3.2" rx="1.5" fill="#e0e0e0"/><rect x="700.1" y="652.2" width="9" height="3.2" rx="1.5" fill="#e0e0e0"/>
<rect x="715.1" y="606.3" width="9" height="3.2" rx="1.5" fill="#e0e0e0"/><rect x="715.1" y="652.2" width="9" height="3.2" rx="1.5" fill="#e0e0e0"/>
<rect x="730.1" y="606.3" width="9" height="3.2" rx="1.5" fill="#e0e0e0"/><rect x="730.1" y="652.2" width="9" height="3.2" rx="1.5" fill="#e0e0e0"/>
<rect x="745.1" y="606.3" width="9" height="3.2" rx="1.5" fill="#e0e0e0"/><rect x="745.1" y="652.2" width="9" height="3.2" rx="1.5" fill="#e0e0e0"/>
<circle cx="574" cy="630" r="5.9" fill="#2a2b2d"/><circle cx="731.2" cy="630" r="5.9" fill="#2a2b2d"/>
<rect x="579" y="661" width="75" height="1.8" fill="#fff"/><rect x="670" y="661" width="87.5" height="1.8" fill="#fff"/>
<g font-family="Liberation Sans" font-weight="bold" font-size="11.5" fill="#fff"><text x="653.5" y="674.3" text-anchor="end">POWER</text><text x="757" y="674.3" text-anchor="end">ANALOG IN</text></g>
<rect x="481.6" y="417" width="151.5" height="14.7" rx="1" fill="#333"/>
<rect x="484.7" y="419.2" width="10.4" height="10.4" fill="#1f1f1f"/>
<path d="M484.7 429.6L487.9 426.6H492.1V422.4L495.1 419.2V429.6Z" fill="#646464"/>
<rect x="486.2" y="420.8" width="5.8" height="5.8" fill="#151515"/>
<rect x="499.7" y="419.2" width="10.4" height="10.4" fill="#1f1f1f"/>
<path d="M499.7 429.6L502.9 426.6H507.1V422.4L510.1 419.2V429.6Z" fill="#646464"/>
<rect x="501.2" y="420.8" width="5.8" height="5.8" fill="#151515"/>
<rect x="514.6" y="419.2" width="10.4" height="10.4" fill="#1f1f1f"/>
<path d="M514.6 429.6L517.9 426.6H522.1V422.4L525.1 419.2V429.6Z" fill="#646464"/>
<rect x="516.2" y="420.8" width="5.8" height="5.8" fill="#151515"/>
<rect x="529.6" y="419.2" width="10.4" height="10.4" fill="#1f1f1f"/>
<path d="M529.6 429.6L532.9 426.6H537.1V422.4L540.1 419.2V429.6Z" fill="#646464"/>
<rect x="531.2" y="420.8" width="5.8" height="5.8" fill="#151515"/>
<rect x="544.6" y="419.2" width="10.4" height="10.4" fill="#1f1f1f"/>
<path d="M544.6 429.6L547.9 426.6H552.1V422.4L555.1 419.2V429.6Z" fill="#646464"/>
<rect x="546.2" y="420.8" width="5.8" height="5.8" fill="#151515"/>
<rect x="559.6" y="419.2" width="10.4" height="10.4" fill="#1f1f1f"/>
<path d="M559.6 429.6L562.9 426.6H567.1V422.4L570.1 419.2V429.6Z" fill="#646464"/>
<rect x="561.2" y="420.8" width="5.8" height="5.8" fill="#151515"/>
<rect x="574.6" y="419.2" width="10.4" height="10.4" fill="#1f1f1f"/>
<path d="M574.6 429.6L577.9 426.6H582.1V422.4L585.1 419.2V429.6Z" fill="#646464"/>
<rect x="576.2" y="420.8" width="5.8" height="5.8" fill="#151515"/>
<rect x="589.6" y="419.2" width="10.4" height="10.4" fill="#1f1f1f"/>
<path d="M589.6 429.6L592.9 426.6H597.1V422.4L600.1 419.2V429.6Z" fill="#646464"/>
<rect x="591.2" y="420.8" width="5.8" height="5.8" fill="#151515"/>
<rect x="604.6" y="419.2" width="10.4" height="10.4" fill="#1f1f1f"/>
<path d="M604.6 429.6L607.9 426.6H612.1V422.4L615.1 419.2V429.6Z" fill="#646464"/>
<rect x="606.2" y="420.8" width="5.8" height="5.8" fill="#151515"/>
<rect x="619.6" y="419.2" width="10.4" height="10.4" fill="#1f1f1f"/>
<path d="M619.6 429.6L622.9 426.6H627.1V422.4L630.1 419.2V429.6Z" fill="#646464"/>
<rect x="621.2" y="420.8" width="5.8" height="5.8" fill="#151515"/>
<rect x="640.4" y="417" width="121.5" height="14.7" rx="1" fill="#333"/>
<rect x="643.4" y="419.2" width="10.4" height="10.4" fill="#1f1f1f"/>
<path d="M643.4 429.6L646.6 426.6H650.9V422.4L653.9 419.2V429.6Z" fill="#646464"/>
<rect x="645.0" y="420.8" width="5.8" height="5.8" fill="#151515"/>
<rect x="658.4" y="419.2" width="10.4" height="10.4" fill="#1f1f1f"/>
<path d="M658.4 429.6L661.6 426.6H665.9V422.4L668.9 419.2V429.6Z" fill="#646464"/>
<rect x="660.0" y="420.8" width="5.8" height="5.8" fill="#151515"/>
<rect x="673.4" y="419.2" width="10.4" height="10.4" fill="#1f1f1f"/>
<path d="M673.4 429.6L676.6 426.6H680.9V422.4L683.9 419.2V429.6Z" fill="#646464"/>
<rect x="675.0" y="420.8" width="5.8" height="5.8" fill="#151515"/>
<rect x="688.4" y="419.2" width="10.4" height="10.4" fill="#1f1f1f"/>
<path d="M688.4 429.6L691.6 426.6H695.9V422.4L698.9 419.2V429.6Z" fill="#646464"/>
<rect x="690.0" y="420.8" width="5.8" height="5.8" fill="#151515"/>
<rect x="703.4" y="419.2" width="10.4" height="10.4" fill="#1f1f1f"/>
<path d="M703.4 429.6L706.6 426.6H710.9V422.4L713.9 419.2V429.6Z" fill="#646464"/>
<rect x="705.0" y="420.8" width="5.8" height="5.8" fill="#151515"/>
<rect x="718.4" y="419.2" width="10.4" height="10.4" fill="#1f1f1f"/>
<path d="M718.4 429.6L721.6 426.6H725.9V422.4L728.9 419.2V429.6Z" fill="#646464"/>
<rect x="720.0" y="420.8" width="5.8" height="5.8" fill="#151515"/>
<rect x="733.4" y="419.2" width="10.4" height="10.4" fill="#1f1f1f"/>
<path d="M733.4 429.6L736.6 426.6H740.9V422.4L743.9 419.2V429.6Z" fill="#646464"/>
<rect x="735.0" y="420.8" width="5.8" height="5.8" fill="#151515"/>
<rect x="748.4" y="419.2" width="10.4" height="10.4" fill="#1f1f1f"/>
<path d="M748.4 429.6L751.6 426.6H755.9V422.4L758.9 419.2V429.6Z" fill="#646464"/>
<rect x="750.0" y="420.8" width="5.8" height="5.8" fill="#151515"/>
<rect x="535.5" y="702.3" width="121.5" height="14.8" rx="1" fill="#333"/>
<rect x="538.5" y="704.5" width="10.4" height="10.4" fill="#1f1f1f"/>
<path d="M538.5 714.9L541.8 711.9H546.0V707.7L549.0 704.5V714.9Z" fill="#646464"/>
<rect x="540.1" y="706.1" width="5.8" height="5.8" fill="#151515"/>
<rect x="553.5" y="704.5" width="10.4" height="10.4" fill="#1f1f1f"/>
<path d="M553.5 714.9L556.8 711.9H561.0V707.7L564.0 704.5V714.9Z" fill="#646464"/>
<rect x="555.1" y="706.1" width="5.8" height="5.8" fill="#151515"/>
<rect x="568.5" y="704.5" width="10.4" height="10.4" fill="#1f1f1f"/>
<path d="M568.5 714.9L571.8 711.9H576.0V707.7L579.0 704.5V714.9Z" fill="#646464"/>
<rect x="570.1" y="706.1" width="5.8" height="5.8" fill="#151515"/>
<rect x="583.5" y="704.5" width="10.4" height="10.4" fill="#1f1f1f"/>
<path d="M583.5 714.9L586.8 711.9H591.0V707.7L594.0 704.5V714.9Z" fill="#646464"/>
<rect x="585.1" y="706.1" width="5.8" height="5.8" fill="#151515"/>
<rect x="598.5" y="704.5" width="10.4" height="10.4" fill="#1f1f1f"/>
<path d="M598.5 714.9L601.8 711.9H606.0V707.7L609.0 704.5V714.9Z" fill="#646464"/>
<rect x="600.1" y="706.1" width="5.8" height="5.8" fill="#151515"/>
<rect x="613.5" y="704.5" width="10.4" height="10.4" fill="#1f1f1f"/>
<path d="M613.5 714.9L616.8 711.9H621.0V707.7L624.0 704.5V714.9Z" fill="#646464"/>
<rect x="615.1" y="706.1" width="5.8" height="5.8" fill="#151515"/>
<rect x="628.5" y="704.5" width="10.4" height="10.4" fill="#1f1f1f"/>
<path d="M628.5 714.9L631.8 711.9H636.0V707.7L639.0 704.5V714.9Z" fill="#646464"/>
<rect x="630.1" y="706.1" width="5.8" height="5.8" fill="#151515"/>
<rect x="643.5" y="704.5" width="10.4" height="10.4" fill="#1f1f1f"/>
<path d="M643.5 714.9L646.8 711.9H651.0V707.7L654.0 704.5V714.9Z" fill="#646464"/>
<rect x="645.1" y="706.1" width="5.8" height="5.8" fill="#151515"/>
<rect x="670.3" y="702.3" width="91.5" height="14.8" rx="1" fill="#333"/>
<rect x="673.3" y="704.5" width="10.4" height="10.4" fill="#1f1f1f"/>
<path d="M673.3 714.9L676.5 711.9H680.8V707.7L683.8 704.5V714.9Z" fill="#646464"/>
<rect x="674.9" y="706.1" width="5.8" height="5.8" fill="#151515"/>
<rect x="688.3" y="704.5" width="10.4" height="10.4" fill="#1f1f1f"/>
<path d="M688.3 714.9L691.5 711.9H695.8V707.7L698.8 704.5V714.9Z" fill="#646464"/>
<rect x="689.9" y="706.1" width="5.8" height="5.8" fill="#151515"/>
<rect x="703.3" y="704.5" width="10.4" height="10.4" fill="#1f1f1f"/>
<path d="M703.3 714.9L706.5 711.9H710.8V707.7L713.8 704.5V714.9Z" fill="#646464"/>
<rect x="704.9" y="706.1" width="5.8" height="5.8" fill="#151515"/>
<rect x="718.3" y="704.5" width="10.4" height="10.4" fill="#1f1f1f"/>
<path d="M718.3 714.9L721.5 711.9H725.8V707.7L728.8 704.5V714.9Z" fill="#646464"/>
<rect x="719.9" y="706.1" width="5.8" height="5.8" fill="#151515"/>
<rect x="733.3" y="704.5" width="10.4" height="10.4" fill="#1f1f1f"/>
<path d="M733.3 714.9L736.5 711.9H740.8V707.7L743.8 704.5V714.9Z" fill="#646464"/>
<rect x="734.9" y="706.1" width="5.8" height="5.8" fill="#151515"/>
<rect x="748.3" y="704.5" width="10.4" height="10.4" fill="#1f1f1f"/>
<path d="M748.3 714.9L751.5 711.9H755.8V707.7L758.8 704.5V714.9Z" fill="#646464"/>
<rect x="749.9" y="706.1" width="5.8" height="5.8" fill="#151515"/>
<text transform="translate(523.6 438.4) rotate(-90)" text-anchor="end" font-family="Liberation Sans" font-size="10.5" fill="#f4f4f4">AREF</text>
<text transform="translate(538.6 438.4) rotate(-90)" text-anchor="end" font-family="Liberation Sans" font-size="10.5" fill="#f4f4f4">GND</text>
<text transform="translate(553.6 438.4) rotate(-90)" text-anchor="end" font-family="Liberation Sans" font-size="10.5" fill="#f4f4f4">13</text>
<text transform="translate(568.6 438.4) rotate(-90)" text-anchor="end" font-family="Liberation Sans" font-size="10.5" fill="#f4f4f4">12</text>
<text transform="translate(583.6 438.4) rotate(-90)" text-anchor="end" font-family="Liberation Sans" font-size="10.5" fill="#f4f4f4">~11</text>
<text transform="translate(598.6 438.4) rotate(-90)" text-anchor="end" font-family="Liberation Sans" font-size="10.5" fill="#f4f4f4">~10</text>
<text transform="translate(613.6 438.4) rotate(-90)" text-anchor="end" font-family="Liberation Sans" font-size="10.5" fill="#f4f4f4">~9</text>
<text transform="translate(628.6 438.4) rotate(-90)" text-anchor="end" font-family="Liberation Sans" font-size="10.5" fill="#f4f4f4">8</text>
<text transform="translate(652.6 438.4) rotate(-90)" text-anchor="end" font-family="Liberation Sans" font-size="10.5" fill="#f4f4f4">7</text>
<text transform="translate(667.6 438.4) rotate(-90)" text-anchor="end" font-family="Liberation Sans" font-size="10.5" fill="#f4f4f4">~6</text>
<text transform="translate(682.6 438.4) rotate(-90)" text-anchor="end" font-family="Liberation Sans" font-size="10.5" fill="#f4f4f4">~5</text>
<text transform="translate(697.6 438.4) rotate(-90)" text-anchor="end" font-family="Liberation Sans" font-size="10.5" fill="#f4f4f4">4</text>
<text transform="translate(712.6 438.4) rotate(-90)" text-anchor="end" font-family="Liberation Sans" font-size="10.5" fill="#f4f4f4">~3</text>
<text transform="translate(727.6 438.4) rotate(-90)" text-anchor="end" font-family="Liberation Sans" font-size="10.5" fill="#f4f4f4">2</text>
<text transform="translate(742.5 438.4) rotate(-90)" text-anchor="end" font-family="Liberation Sans" font-size="10.5" font-weight="bold" fill="#f4f4f4">TX→1</text>
<text transform="translate(757.5 438.4) rotate(-90)" text-anchor="end" font-family="Liberation Sans" font-size="10.5" font-weight="bold" fill="#f4f4f4">RX←0</text>
<text transform="translate(561.8 697) rotate(-90)" text-anchor="start" font-family="Liberation Sans" font-size="8.6" fill="#f4f4f4">IOREF</text>
<text transform="translate(576.8 697) rotate(-90)" text-anchor="start" font-family="Liberation Sans" font-size="8.6" fill="#f4f4f4">RESET</text>
<text transform="translate(591.8 697) rotate(-90)" text-anchor="start" font-family="Liberation Sans" font-size="8.6" fill="#f4f4f4">3.3V</text>
<text transform="translate(606.8 697) rotate(-90)" text-anchor="start" font-family="Liberation Sans" font-size="8.6" fill="#f4f4f4">5V</text>
<text transform="translate(621.8 697) rotate(-90)" text-anchor="start" font-family="Liberation Sans" font-size="8.6" fill="#f4f4f4">GND</text>
<text transform="translate(636.8 697) rotate(-90)" text-anchor="start" font-family="Liberation Sans" font-size="8.6" fill="#f4f4f4">GND</text>
<text transform="translate(651.8 697) rotate(-90)" text-anchor="start" font-family="Liberation Sans" font-size="8.6" fill="#f4f4f4">Vin</text>
<text transform="translate(681.8 697) rotate(-90)" text-anchor="start" font-family="Liberation Serif" font-size="10.5" font-weight="bold" fill="#f4f4f4">A0</text>
<text transform="translate(696.8 697) rotate(-90)" text-anchor="start" font-family="Liberation Serif" font-size="10.5" font-weight="bold" fill="#f4f4f4">A1</text>
<text transform="translate(711.8 697) rotate(-90)" text-anchor="start" font-family="Liberation Serif" font-size="10.5" font-weight="bold" fill="#f4f4f4">A2</text>
<text transform="translate(726.8 697) rotate(-90)" text-anchor="start" font-family="Liberation Serif" font-size="10.5" font-weight="bold" fill="#f4f4f4">A3</text>
<text transform="translate(741.8 697) rotate(-90)" text-anchor="start" font-family="Liberation Serif" font-size="10.5" font-weight="bold" fill="#f4f4f4">A4</text>
<text transform="translate(756.8 697) rotate(-90)" text-anchor="start" font-family="Liberation Serif" font-size="10.5" font-weight="bold" fill="#f4f4f4">A5</text>
<rect x="913.3" y="415.5" width="495.0" height="319.0" rx="4" fill="#dcdcdc"/>
<rect x="913.3" y="569" width="495.0" height="12" fill="#cdcdcd"/>
<rect x="913.3" y="468.5" width="495.0" height="1.2" fill="#d3d3d3"/><rect x="913.3" y="679.5" width="495.0" height="1.2" fill="#d3d3d3"/>
<rect x="935.5" y="421" width="451" height="1.6" fill="#333"/><rect x="935.5" y="457.3" width="451" height="1.6" fill="#cc2b2b"/>
<rect x="935.5" y="691.5" width="451" height="1.6" fill="#333"/><rect x="935.5" y="727" width="451" height="1.6" fill="#cc2b2b"/>
<rect x="924.8" y="423" width="1.4" height="8" fill="#333"/><path d="M925.5 450V458M921.5 454H929.5" stroke="#cc2b2b" stroke-width="1.3"/>
<rect x="924.8" y="693.5" width="1.4" height="8" fill="#333"/><path d="M925.5 720V728M921.5 724H929.5" stroke="#cc2b2b" stroke-width="1.3"/>
<rect x="1394.1" y="423" width="1.4" height="8" fill="#333"/><path d="M1394.8 450V458M1390.8 454H1398.8" stroke="#cc2b2b" stroke-width="1.3"/>
<rect x="1394.1" y="693.5" width="1.4" height="8" fill="#333"/><path d="M1394.8 720V728M1390.8 724H1398.8" stroke="#cc2b2b" stroke-width="1.3"/>
<defs><pattern id="hp" patternUnits="userSpaceOnUse" width="15" height="15.02" x="936.2" y="425"><path d="M3.2 7.8A4.3 4.3 0 0 1 11.8 7.8Z" fill="#c8c8c8"/><path d="M3.2 7.8A4.3 4.3 0 0 0 11.8 7.8Z" fill="#e6e6e6"/><circle cx="7.5" cy="7.6" r="2.35" fill="#303030"/></pattern></defs>
<rect x="936.2" y="425.0" width="450" height="30.04" fill="url(#hp)"/>
<rect x="936.2" y="484.7" width="450" height="75.10" fill="url(#hp)"/>
<rect x="936.2" y="590.0" width="450" height="75.10" fill="url(#hp)"/>
<rect x="936.2" y="695.0" width="450" height="30.04" fill="url(#hp)"/>
<text transform="translate(947.4 478.5) rotate(-90) scale(0.8 1)" text-anchor="middle" font-family="Liberation Sans" font-size="10.3" fill="#333">1</text><text transform="translate(947.4 670.8) rotate(-90) scale(0.8 1)" text-anchor="middle" font-family="Liberation Sans" font-size="10.3" fill="#333">1</text><text transform="translate(962.4 478.5) rotate(-90) scale(0.8 1)" text-anchor="middle" font-family="Liberation Sans" font-size="10.3" fill="#333">2</text><text transform="translate(962.4 670.8) rotate(-90) scale(0.8 1)" text-anchor="middle" font-family="Liberation Sans" font-size="10.3" fill="#333">2</text><text transform="translate(977.4 478.5) rotate(-90) scale(0.8 1)" text-anchor="middle" font-family="Liberation Sans" font-size="10.3" fill="#333">3</text><text transform="translate(977.4 670.8) rotate(-90) scale(0.8 1)" text-anchor="middle" font-family="Liberation Sans" font-size="10.3" fill="#333">3</text><text transform="translate(992.4 478.5) rotate(-90) scale(0.8 1)" text-anchor="middle" font-family="Liberation Sans" font-size="10.3" fill="#333">4</text><text transform="translate(992.4 670.8) rotate(-90) scale(0.8 1)" text-anchor="middle" font-family="Liberation Sans" font-size="10.3" fill="#333">4</text><text transform="translate(1007.4 478.5) rotate(-90) scale(0.8 1)" text-anchor="middle" font-family="Liberation Sans" font-size="10.3" fill="#333">5</text><text transform="translate(1007.4 670.8) rotate(-90) scale(0.8 1)" text-anchor="middle" font-family="Liberation Sans" font-size="10.3" fill="#333">5</text><text transform="translate(1022.4 478.5) rotate(-90) scale(0.8 1)" text-anchor="middle" font-family="Liberation Sans" font-size="10.3" fill="#333">6</text><text transform="translate(1022.4 670.8) rotate(-90) scale(0.8 1)" text-anchor="middle" font-family="Liberation Sans" font-size="10.3" fill="#333">6</text><text transform="translate(1037.4 478.5) rotate(-90) scale(0.8 1)" text-anchor="middle" font-family="Liberation Sans" font-size="10.3" fill="#333">7</text><text transform="translate(1037.4 670.8) rotate(-90) scale(0.8 1)" text-anchor="middle" font-family="Liberation Sans" font-size="10.3" fill="#333">7</text><text transform="translate(1052.4 478.5) rotate(-90) scale(0.8 1)" text-anchor="middle" font-family="Liberation Sans" font-size="10.3" fill="#333">8</text><text transform="translate(1052.4 670.8) rotate(-90) scale(0.8 1)" text-anchor="middle" font-family="Liberation Sans" font-size="10.3" fill="#333">8</text><text transform="translate(1067.4 478.5) rotate(-90) scale(0.8 1)" text-anchor="middle" font-family="Liberation Sans" font-size="10.3" fill="#333">9</text><text transform="translate(1067.4 670.8) rotate(-90) scale(0.8 1)" text-anchor="middle" font-family="Liberation Sans" font-size="10.3" fill="#333">9</text><text transform="translate(1082.4 478.5) rotate(-90) scale(0.8 1)" text-anchor="middle" font-family="Liberation Sans" font-size="10.3" fill="#333">10</text><text transform="translate(1082.4 670.8) rotate(-90) scale(0.8 1)" text-anchor="middle" font-family="Liberation Sans" font-size="10.3" fill="#333">10</text><text transform="translate(1097.4 478.5) rotate(-90) scale(0.8 1)" text-anchor="middle" font-family="Liberation Sans" font-size="10.3" fill="#333">11</text><text transform="translate(1097.4 670.8) rotate(-90) scale(0.8 1)" text-anchor="middle" font-family="Liberation Sans" font-size="10.3" fill="#333">11</text><text transform="translate(1112.4 478.5) rotate(-90) scale(0.8 1)" text-anchor="middle" font-family="Liberation Sans" font-size="10.3" fill="#333">12</text><text transform="translate(1112.4 670.8) rotate(-90) scale(0.8 1)" text-anchor="middle" font-family="Liberation Sans" font-size="10.3" fill="#333">12</text><text transform="translate(1127.4 478.5) rotate(-90) scale(0.8 1)" text-anchor="middle" font-family="Liberation Sans" font-size="10.3" fill="#333">13</text><text transform="translate(1127.4 670.8) rotate(-90) scale(0.8 1)" text-anchor="middle" font-family="Liberation Sans" font-size="10.3" fill="#333">13</text><text transform="translate(1142.4 478.5) rotate(-90) scale(0.8 1)" text-anchor="middle" font-family="Liberation Sans" font-size="10.3" fill="#333">14</text><text transform="translate(1142.4 670.8) rotate(-90) scale(0.8 1)" text-anchor="middle" font-family="Liberation Sans" font-size="10.3" fill="#333">14</text><text transform="translate(1157.4 478.5) rotate(-90) scale(0.8 1)" text-anchor="middle" font-family="Liberation Sans" font-size="10.3" fill="#333">15</text><text transform="translate(1157.4 670.8) rotate(-90) scale(0.8 1)" text-anchor="middle" font-family="Liberation Sans" font-size="10.3" fill="#333">15</text><text transform="translate(1172.4 478.5) rotate(-90) scale(0.8 1)" text-anchor="middle" font-family="Liberation Sans" font-size="10.3" fill="#333">16</text><text transform="translate(1172.4 670.8) rotate(-90) scale(0.8 1)" text-anchor="middle" font-family="Liberation Sans" font-size="10.3" fill="#333">16</text><text transform="translate(1187.4 478.5) rotate(-90) scale(0.8 1)" text-anchor="middle" font-family="Liberation Sans" font-size="10.3" fill="#333">17</text><text transform="translate(1187.4 670.8) rotate(-90) scale(0.8 1)" text-anchor="middle" font-family="Liberation Sans" font-size="10.3" fill="#333">17</text><text transform="translate(1202.4 478.5) rotate(-90) scale(0.8 1)" text-anchor="middle" font-family="Liberation Sans" font-size="10.3" fill="#333">18</text><text transform="translate(1202.4 670.8) rotate(-90) scale(0.8 1)" text-anchor="middle" font-family="Liberation Sans" font-size="10.3" fill="#333">18</text><text transform="translate(1217.4 478.5) rotate(-90) scale(0.8 1)" text-anchor="middle" font-family="Liberation Sans" font-size="10.3" fill="#333">19</text><text transform="translate(1217.4 670.8) rotate(-90) scale(0.8 1)" text-anchor="middle" font-family="Liberation Sans" font-size="10.3" fill="#333">19</text><text transform="translate(1232.4 478.5) rotate(-90) scale(0.8 1)" text-anchor="middle" font-family="Liberation Sans" font-size="10.3" fill="#333">20</text><text transform="translate(1232.4 670.8) rotate(-90) scale(0.8 1)" text-anchor="middle" font-family="Liberation Sans" font-size="10.3" fill="#333">20</text><text transform="translate(1247.4 478.5) rotate(-90) scale(0.8 1)" text-anchor="middle" font-family="Liberation Sans" font-size="10.3" fill="#333">21</text><text transform="translate(1247.4 670.8) rotate(-90) scale(0.8 1)" text-anchor="middle" font-family="Liberation Sans" font-size="10.3" fill="#333">21</text><text transform="translate(1262.4 478.5) rotate(-90) scale(0.8 1)" text-anchor="middle" font-family="Liberation Sans" font-size="10.3" fill="#333">22</text><text transform="translate(1262.4 670.8) rotate(-90) scale(0.8 1)" text-anchor="middle" font-family="Liberation Sans" font-size="10.3" fill="#333">22</text><text transform="translate(1277.4 478.5) rotate(-90) scale(0.8 1)" text-anchor="middle" font-family="Liberation Sans" font-size="10.3" fill="#333">23</text><text transform="translate(1277.4 670.8) rotate(-90) scale(0.8 1)" text-anchor="middle" font-family="Liberation Sans" font-size="10.3" fill="#333">23</text><text transform="translate(1292.4 478.5) rotate(-90) scale(0.8 1)" text-anchor="middle" font-family="Liberation Sans" font-size="10.3" fill="#333">24</text><text transform="translate(1292.4 670.8) rotate(-90) scale(0.8 1)" text-anchor="middle" font-family="Liberation Sans" font-size="10.3" fill="#333">24</text><text transform="translate(1307.4 478.5) rotate(-90) scale(0.8 1)" text-anchor="middle" font-family="Liberation Sans" font-size="10.3" fill="#333">25</text><text transform="translate(1307.4 670.8) rotate(-90) scale(0.8 1)" text-anchor="middle" font-family="Liberation Sans" font-size="10.3" fill="#333">25</text><text transform="translate(1322.4 478.5) rotate(-90) scale(0.8 1)" text-anchor="middle" font-family="Liberation Sans" font-size="10.3" fill="#333">26</text><text transform="translate(1322.4 670.8) rotate(-90) scale(0.8 1)" text-anchor="middle" font-family="Liberation Sans" font-size="10.3" fill="#333">26</text><text transform="translate(1337.4 478.5) rotate(-90) scale(0.8 1)" text-anchor="middle" font-family="Liberation Sans" font-size="10.3" fill="#333">27</text><text transform="translate(1337.4 670.8) rotate(-90) scale(0.8 1)" text-anchor="middle" font-family="Liberation Sans" font-size="10.3" fill="#333">27</text><text transform="translate(1352.4 478.5) rotate(-90) scale(0.8 1)" text-anchor="middle" font-family="Liberation Sans" font-size="10.3" fill="#333">28</text><text transform="translate(1352.4 670.8) rotate(-90) scale(0.8 1)" text-anchor="middle" font-family="Liberation Sans" font-size="10.3" fill="#333">28</text><text transform="translate(1367.4 478.5) rotate(-90) scale(0.8 1)" text-anchor="middle" font-family="Liberation Sans" font-size="10.3" fill="#333">29</text><text transform="translate(1367.4 670.8) rotate(-90) scale(0.8 1)" text-anchor="middle" font-family="Liberation Sans" font-size="10.3" fill="#333">29</text><text transform="translate(1382.4 478.5) rotate(-90) scale(0.8 1)" text-anchor="middle" font-family="Liberation Sans" font-size="10.3" fill="#333">30</text><text transform="translate(1382.4 670.8) rotate(-90) scale(0.8 1)" text-anchor="middle" font-family="Liberation Sans" font-size="10.3" fill="#333">30</text>
<text transform="translate(931.5 492.2) rotate(-90)" text-anchor="middle" font-family="Liberation Sans" font-size="11" fill="#333">j</text>
<text transform="translate(1398.5 492.2) rotate(-90)" text-anchor="middle" font-family="Liberation Sans" font-size="11" fill="#333">j</text>
<text transform="translate(931.5 507.2) rotate(-90)" text-anchor="middle" font-family="Liberation Sans" font-size="11" fill="#333">i</text>
<text transform="translate(1398.5 507.2) rotate(-90)" text-anchor="middle" font-family="Liberation Sans" font-size="11" fill="#333">i</text>
<text transform="translate(931.5 522.3) rotate(-90)" text-anchor="middle" font-family="Liberation Sans" font-size="11" fill="#333">h</text>
<text transform="translate(1398.5 522.3) rotate(-90)" text-anchor="middle" font-family="Liberation Sans" font-size="11" fill="#333">h</text>
<text transform="translate(931.5 537.3) rotate(-90)" text-anchor="middle" font-family="Liberation Sans" font-size="11" fill="#333">g</text>
<text transform="translate(1398.5 537.3) rotate(-90)" text-anchor="middle" font-family="Liberation Sans" font-size="11" fill="#333">g</text>
<text transform="translate(931.5 552.3) rotate(-90)" text-anchor="middle" font-family="Liberation Sans" font-size="11" fill="#333">f</text>
<text transform="translate(1398.5 552.3) rotate(-90)" text-anchor="middle" font-family="Liberation Sans" font-size="11" fill="#333">f</text>
<text transform="translate(931.5 597.5) rotate(-90)" text-anchor="middle" font-family="Liberation Sans" font-size="11" fill="#333">e</text>
<text transform="translate(1398.5 597.5) rotate(-90)" text-anchor="middle" font-family="Liberation Sans" font-size="11" fill="#333">e</text>
<text transform="translate(931.5 612.5) rotate(-90)" text-anchor="middle" font-family="Liberation Sans" font-size="11" fill="#333">d</text>
<text transform="translate(1398.5 612.5) rotate(-90)" text-anchor="middle" font-family="Liberation Sans" font-size="11" fill="#333">d</text>
<text transform="translate(931.5 627.5) rotate(-90)" text-anchor="middle" font-family="Liberation Sans" font-size="11" fill="#333">c</text>
<text transform="translate(1398.5 627.5) rotate(-90)" text-anchor="middle" font-family="Liberation Sans" font-size="11" fill="#333">c</text>
<text transform="translate(931.5 642.5) rotate(-90)" text-anchor="middle" font-family="Liberation Sans" font-size="11" fill="#333">b</text>
<text transform="translate(1398.5 642.5) rotate(-90)" text-anchor="middle" font-family="Liberation Sans" font-size="11" fill="#333">b</text>
<text transform="translate(931.5 657.5) rotate(-90)" text-anchor="middle" font-family="Liberation Sans" font-size="11" fill="#333">a</text>
<text transform="translate(1398.5 657.5) rotate(-90)" text-anchor="middle" font-family="Liberation Sans" font-size="11" fill="#333">a</text>
<path d="M988.7 657.5 L990.2 751.0" fill="none" stroke="#363b3f" stroke-width="3.6" stroke-linecap="round" stroke-linejoin="round"/>
<path d="M1003.7 717.2 L1005.3 751.0" fill="none" stroke="#e42126" stroke-width="3.6" stroke-linecap="round" stroke-linejoin="round"/>
<path d="M973.7 657.5 L1006.4 657.5 Q1020.4 657.5 1020.4 671.5 L1020.4 751.0" fill="none" stroke="#d9279c" stroke-width="3.6" stroke-linecap="round" stroke-linejoin="round"/>
<path d="M1033.7 552.3 L1035.3 751.0" fill="none" stroke="#fb8500" stroke-width="3.6" stroke-linecap="round" stroke-linejoin="round"/>
<path d="M1048.7 702.5 L1050.6 751.0" fill="none" stroke="#363b3f" stroke-width="3.6" stroke-linecap="round" stroke-linejoin="round"/>
<path d="M1063.7 552.3 L1065.4 751.0" fill="none" stroke="#ffdc00" stroke-width="3.6" stroke-linecap="round" stroke-linejoin="round"/>
<path d="M1138.7 552.3 L1140.5 751.0" fill="none" stroke="#3cb43c" stroke-width="3.6" stroke-linecap="round" stroke-linejoin="round"/>
<path d="M1153.7 552.3 L1155.5 751.0" fill="none" stroke="#62c8dc" stroke-width="3.6" stroke-linecap="round" stroke-linejoin="round"/>
<path d="M1168.7 552.3 L1170.5 751.0" fill="none" stroke="#0b9ede" stroke-width="3.6" stroke-linecap="round" stroke-linejoin="round"/>
<path d="M1183.7 552.3 L1185.6 751.0" fill="none" stroke="#7f3aa0" stroke-width="3.6" stroke-linecap="round" stroke-linejoin="round"/>
<path d="M1198.7 522.3 L1200.5 751.0" fill="none" stroke="#ad7c4c" stroke-width="3.6" stroke-linecap="round" stroke-linejoin="round"/>
<path d="M1213.7 702.5 L1215.4 751.0" fill="none" stroke="#363b3f" stroke-width="3.6" stroke-linecap="round" stroke-linejoin="round"/>
<rect x="949.5" y="751" width="471.5" height="212.5" rx="3" fill="#50a36b"/>
<circle cx="962.8" cy="764.1" r="7.4" fill="#fff"/>
<circle cx="1408" cy="764.1" r="7.4" fill="#fff"/>
<circle cx="962.8" cy="950" r="7.4" fill="#fff"/>
<circle cx="1408" cy="950" r="7.4" fill="#fff"/>
<rect x="975.6" y="786" width="420.4" height="149" rx="2" fill="#3d6d4c"/>
<rect x="975.6" y="782.9" width="420.4" height="148.2" rx="2" fill="#333"/>
<rect x="991.1" y="810" width="390" height="94.4" rx="2" fill="#1e2a48"/>
<circle cx="990.2" cy="758.7" r="4.6" fill="#dac9a0"/><rect x="988.4" y="756.9" width="3.6" height="3.6" fill="#363b3f"/>
<text transform="translate(988.0 765.5) rotate(90)" font-family="Liberation Mono" font-size="8" font-weight="bold" fill="#e8f0ea">GND</text>
<circle cx="1005.2" cy="758.7" r="4.6" fill="#dac9a0"/><rect x="1003.4" y="756.9" width="3.6" height="3.6" fill="#e42126"/>
<text transform="translate(1003.0 765.5) rotate(90)" font-family="Liberation Mono" font-size="8" font-weight="bold" fill="#e8f0ea">VCC</text>
<circle cx="1020.3" cy="758.7" r="4.6" fill="#dac9a0"/><rect x="1018.5" y="756.9" width="3.6" height="3.6" fill="#d9279c"/>
<text transform="translate(1018.1 765.5) rotate(90)" font-family="Liberation Mono" font-size="8" font-weight="bold" fill="#e8f0ea">V0</text>
<circle cx="1035.3" cy="758.7" r="4.6" fill="#dac9a0"/><rect x="1033.5" y="756.9" width="3.6" height="3.6" fill="#fb8500"/>
<text transform="translate(1033.1 765.5) rotate(90)" font-family="Liberation Mono" font-size="8" font-weight="bold" fill="#e8f0ea">RS</text>
<circle cx="1050.3" cy="758.7" r="4.6" fill="#dac9a0"/><rect x="1048.5" y="756.9" width="3.6" height="3.6" fill="#363b3f"/>
<text transform="translate(1048.1 765.5) rotate(90)" font-family="Liberation Mono" font-size="8" font-weight="bold" fill="#e8f0ea">RW</text>
<circle cx="1065.4" cy="758.7" r="4.6" fill="#dac9a0"/><rect x="1063.6" y="756.9" width="3.6" height="3.6" fill="#ffdc00"/>
<text transform="translate(1063.2 765.5) rotate(90)" font-family="Liberation Mono" font-size="8" font-weight="bold" fill="#e8f0ea">E</text>
<circle cx="1080.4" cy="758.7" r="4.6" fill="#dac9a0"/><rect x="1078.6" y="756.9" width="3.6" height="3.6" fill="#fff"/>
<text transform="translate(1078.2 765.5) rotate(90)" font-family="Liberation Mono" font-size="8" font-weight="bold" fill="#e8f0ea">DB0</text>
<circle cx="1095.4" cy="758.7" r="4.6" fill="#dac9a0"/><rect x="1093.6" y="756.9" width="3.6" height="3.6" fill="#fff"/>
<text transform="translate(1093.2 765.5) rotate(90)" font-family="Liberation Mono" font-size="8" font-weight="bold" fill="#e8f0ea">DB1</text>
<circle cx="1110.4" cy="758.7" r="4.6" fill="#dac9a0"/><rect x="1108.6" y="756.9" width="3.6" height="3.6" fill="#fff"/>
<text transform="translate(1108.2 765.5) rotate(90)" font-family="Liberation Mono" font-size="8" font-weight="bold" fill="#e8f0ea">DB2</text>
<circle cx="1125.5" cy="758.7" r="4.6" fill="#dac9a0"/><rect x="1123.7" y="756.9" width="3.6" height="3.6" fill="#fff"/>
<text transform="translate(1123.3 765.5) rotate(90)" font-family="Liberation Mono" font-size="8" font-weight="bold" fill="#e8f0ea">DB3</text>
<circle cx="1140.5" cy="758.7" r="4.6" fill="#dac9a0"/><rect x="1138.7" y="756.9" width="3.6" height="3.6" fill="#3cb43c"/>
<text transform="translate(1138.3 765.5) rotate(90)" font-family="Liberation Mono" font-size="8" font-weight="bold" fill="#e8f0ea">DB4</text>
<circle cx="1155.5" cy="758.7" r="4.6" fill="#dac9a0"/><rect x="1153.7" y="756.9" width="3.6" height="3.6" fill="#62c8dc"/>
<text transform="translate(1153.3 765.5) rotate(90)" font-family="Liberation Mono" font-size="8" font-weight="bold" fill="#e8f0ea">DB5</text>
<circle cx="1170.6" cy="758.7" r="4.6" fill="#dac9a0"/><rect x="1168.8" y="756.9" width="3.6" height="3.6" fill="#0b9ede"/>
<text transform="translate(1168.4 765.5) rotate(90)" font-family="Liberation Mono" font-size="8" font-weight="bold" fill="#e8f0ea">DB6</text>
<circle cx="1185.6" cy="758.7" r="4.6" fill="#dac9a0"/><rect x="1183.8" y="756.9" width="3.6" height="3.6" fill="#7f3aa0"/>
<text transform="translate(1183.4 765.5) rotate(90)" font-family="Liberation Mono" font-size="8" font-weight="bold" fill="#e8f0ea">DB7</text>
<circle cx="1200.6" cy="758.7" r="4.6" fill="#dac9a0"/><rect x="1198.8" y="756.9" width="3.6" height="3.6" fill="#ad7c4c"/>
<text transform="translate(1198.4 765.5) rotate(90)" font-family="Liberation Mono" font-size="8" font-weight="bold" fill="#e8f0ea">LED</text>
<circle cx="1215.7" cy="758.7" r="4.6" fill="#dac9a0"/><rect x="1213.9" y="756.9" width="3.6" height="3.6" fill="#363b3f"/>
<text transform="translate(1213.5 765.5) rotate(90)" font-family="Liberation Mono" font-size="8" font-weight="bold" fill="#e8f0ea">LED</text>
<path d="M958.7 657.5 L958.7 717.2" fill="none" stroke="#e42126" stroke-width="3.6" stroke-linecap="round" stroke-linejoin="round"/>
<path d="M1318.7 552.3 L1318.7 702.5" fill="none" stroke="#363b3f" stroke-width="3.6" stroke-linecap="round" stroke-linejoin="round"/>
<path d="M1363.7 432.5 L1363.7 702.5" fill="none" stroke="#363b3f" stroke-width="3.6" stroke-linecap="round" stroke-linejoin="round"/>
<path d="M1378.7 447.5 L1378.7 717.2" fill="none" stroke="#e42126" stroke-width="3.6" stroke-linecap="round" stroke-linejoin="round"/>
<rect x="957.1" y="600" width="2.8" height="28" rx="1.2" fill="#8a8a8a"/>
<rect x="972.1" y="600" width="2.8" height="28" rx="1.2" fill="#8a8a8a"/>
<rect x="987.1" y="600" width="2.8" height="28" rx="1.2" fill="#8a8a8a"/>
<circle cx="973.8" cy="582.4" r="35.9" fill="#2c4457"/><circle cx="973.8" cy="582.4" r="27.2" fill="#1d3244"/>
<path d="M946.8 586.4A27.2 27.2 0 0 0 977.8 609.4L975.8 613.4A31 31 0 0 1 942.8 584.4Z" fill="#243a4d" opacity="0.6"/>
<path d="M999.8 582.4L996.3 582.4M999.7 584.7L996.2 584.4M999.4 586.9L996.0 586.3M998.9 589.1L995.5 588.2M998.2 591.3L994.9 590.1M997.4 593.4L994.2 591.9M996.3 595.4L993.3 593.6M995.1 597.3L992.2 595.3M993.7 599.1L991.0 596.9M992.2 600.8L989.7 598.3M990.5 602.3L988.3 599.6M988.7 603.7L986.7 600.8M986.8 604.9L985.0 601.9M984.8 606.0L983.3 602.8M982.7 606.8L981.5 603.5M980.5 607.5L979.6 604.1M978.3 608.0L977.7 604.6M976.1 608.3L975.8 604.8M973.8 608.4L973.8 604.9M971.5 608.3L971.8 604.8M969.3 608.0L969.9 604.6M967.1 607.5L968.0 604.1M964.9 606.8L966.1 603.5M962.8 606.0L964.3 602.8M960.8 604.9L962.5 601.9M958.9 603.7L960.9 600.8M957.1 602.3L959.3 599.6M955.4 600.8L957.9 598.3M953.9 599.1L956.6 596.9M952.5 597.3L955.4 595.3M951.3 595.4L954.3 593.6M950.2 593.4L953.4 591.9M949.4 591.3L952.7 590.1M948.7 589.1L952.1 588.2M948.2 586.9L951.6 586.3M947.9 584.7L951.4 584.4M947.8 582.4L951.3 582.4M947.9 580.1L951.4 580.4M948.2 577.9L951.6 578.5M948.7 575.7L952.1 576.6M949.4 573.5L952.7 574.7M950.2 571.4L953.4 572.9M951.3 569.4L954.3 571.1M952.5 567.5L955.4 569.5M953.9 565.7L956.6 567.9M955.4 564.0L957.9 566.5M957.1 562.5L959.3 565.2M958.9 561.1L960.9 564.0M960.8 559.9L962.5 562.9M962.8 558.8L964.3 562.0M964.9 558.0L966.1 561.3M967.1 557.3L968.0 560.7M969.3 556.8L969.9 560.2M971.5 556.5L971.8 560.0M973.8 556.4L973.8 559.9M976.1 556.5L975.8 560.0M978.3 556.8L977.7 560.2M980.5 557.3L979.6 560.7M982.7 558.0L981.5 561.3M984.8 558.8L983.3 562.0M986.8 559.9L985.0 562.9M988.7 561.1L986.7 564.0M990.5 562.5L988.3 565.2M992.2 564.0L989.7 566.5M993.7 565.7L991.0 567.9M995.1 567.5L992.2 569.5M996.3 569.4L993.3 571.1M997.4 571.4L994.2 572.9M998.2 573.5L994.9 574.7M998.9 575.7L995.5 576.6M999.4 577.9L996.0 578.5M999.7 580.1L996.2 580.4" stroke="#4f7fae" stroke-width="0.9"/>
<circle cx="973.8" cy="582.4" r="22.7" fill="#6b9dd0"/>
<circle cx="1005.4" cy="582.4" r="1.5" fill="#5a8fc2"/>
<circle cx="996.1" cy="560.1" r="1.5" fill="#5a8fc2"/>
<circle cx="973.8" cy="550.8" r="1.5" fill="#5a8fc2"/>
<circle cx="951.5" cy="560.1" r="1.5" fill="#5a8fc2"/>
<circle cx="942.2" cy="582.4" r="1.5" fill="#5a8fc2"/>
<circle cx="951.5" cy="604.7" r="1.5" fill="#5a8fc2"/>
<circle cx="996.1" cy="604.7" r="1.5" fill="#5a8fc2"/>
<path d="M977.3 585.9L980.5 582.6L995.5 597.6L991.5 602.5Z" fill="#14293a"/><circle cx="978.9" cy="584.3" r="2.3" fill="#14293a"/>
<rect x="1197.4" y="447.5" width="2.6" height="60" fill="#8a8a8a"/>
<path d="M1198.7 453.6Q1201 455 1202 457.5Q1205.8 459 1206 463V467Q1206 469 1204.5 470V487Q1206 488 1206 491V495Q1205.8 497 1202.5 497.5Q1201 498.3 1198.7 498.3Q1196.4 498.3 1194.9 497.5Q1191.6 497 1191.4 495V491Q1191.4 488 1192.9 487V470Q1191.4 469 1191.4 467V463Q1191.6 459 1195.4 457.5Q1196.4 455 1198.7 453.6Z" fill="#e2bd80"/>
<rect x="1191.3" y="462.5" width="14.8" height="4.6" rx="0.8" fill="#ff1414"/><rect x="1193" y="471" width="11.4" height="3.8" fill="#ff1414"/><rect x="1193" y="478.5" width="11.4" height="3.6" fill="#8b4010"/><rect x="1192" y="490.8" width="7" height="0.9" fill="#5a5a20"/><rect x="1199" y="490.8" width="6" height="0.9" fill="#d8d040"/>
<rect x="1287.4" y="492" width="2.6" height="8" fill="#888"/>
<rect x="1317.4" y="492" width="2.6" height="8" fill="#888"/>
<rect x="1287.4" y="530" width="2.6" height="7" fill="#888"/>
<rect x="1317.4" y="530" width="2.6" height="7" fill="#888"/>
<rect x="1285" y="497.5" width="36.7" height="35.8" rx="2" fill="#bdbdbd"/><rect x="1286" y="498.5" width="34.7" height="33.8" rx="2" fill="#c8c8c8"/>
<circle cx="1290.8" cy="502" r="3.3" fill="#555"/>
<circle cx="1316.3" cy="502" r="3.3" fill="#555"/>
<circle cx="1290.8" cy="528.5" r="3.3" fill="#555"/>
<circle cx="1316.3" cy="528.5" r="3.3" fill="#555"/>
<circle cx="1303.5" cy="516.5" r="10" fill="#777"/><circle cx="1303.3" cy="515" r="10" fill="#333"/>
<path d="M603.7 710.0 L603.7 718.7 Q603.7 732.7 617.7 732.7 L929.7 732.7 Q943.7 732.7 943.7 718.7 L943.7 717.2" fill="none" stroke="#e42126" stroke-width="3.6" stroke-linecap="round" stroke-linejoin="round"/>
<path d="M618.9 710.0 L618.9 693.9 Q618.9 679.9 632.9 679.9 L929.7 679.9 Q943.7 679.9 943.7 693.9 L943.7 702.5" fill="none" stroke="#363b3f" stroke-width="3.6" stroke-linecap="round" stroke-linejoin="round"/>
<path d="M564.6 424.7 L564.6 333.8 Q564.6 317.8 580.6 317.8 L1017.5 317.8 Q1033.5 317.8 1033.5 333.8 L1033.5 492.2" fill="none" stroke="#fb8500" stroke-width="3.6" stroke-linecap="round" stroke-linejoin="round"/>
<path d="M579.6 424.7 L579.6 353.6 Q579.6 337.6 595.6 337.6 L1047.5 337.6 Q1063.5 337.6 1063.5 353.6 L1063.5 492.2" fill="none" stroke="#ffdc00" stroke-width="3.6" stroke-linecap="round" stroke-linejoin="round"/>
<path d="M663.6 424.7 L663.6 411.4 Q663.6 397.4 677.6 397.4 L1169.5 397.4 Q1183.5 397.4 1183.5 411.4 L1183.5 537.3" fill="none" stroke="#7f3aa0" stroke-width="3.6" stroke-linecap="round" stroke-linejoin="round"/>
<path d="M708.6 424.7 L708.6 401.1 Q708.6 385.1 724.6 385.1 L1152.6 385.1 Q1168.6 385.1 1168.6 401.1 L1168.6 537.3" fill="none" stroke="#0b9ede" stroke-width="3.6" stroke-linecap="round" stroke-linejoin="round"/>
<path d="M693.6 424.7 L693.6 389.0 Q693.6 373.0 709.6 373.0 L1137.5 373.0 Q1153.5 373.0 1153.5 389.0 L1153.5 537.3" fill="none" stroke="#62c8dc" stroke-width="3.6" stroke-linecap="round" stroke-linejoin="round"/>
<path d="M678.6 424.7 L678.6 372.4 Q678.6 356.4 694.6 356.4 L1122.5 356.4 Q1138.5 356.4 1138.5 372.4 L1138.5 537.3" fill="none" stroke="#3cb43c" stroke-width="3.6" stroke-linecap="round" stroke-linejoin="round"/>
<path d="M723.6 424.7 L723.6 317.8 Q723.6 301.8 739.6 301.8 L1272.5 301.8 Q1288.5 301.8 1288.5 317.8 L1288.5 492.2" fill="none" stroke="#363b3f" stroke-width="3.6" stroke-linecap="round" stroke-linejoin="round"/></svg>
<div class="a" style="left:1574px;top:249px;width:346px;height:781px;background:#f0f0f3;border-left:1px solid #dde1e7"></div>
<div class="a" style="left:1583px;top:258px;width:267px;height:56px;background:#f0f0f3;border:1px solid #e0e2e6;border-radius:4px;box-shadow:0 1px 3px rgba(0,0,0,0.12)"></div>
<div class="a" style="left:1596px;top:268px;font-size:13px;color:#333">Starters</div>
<div class="a" style="left:1596px;top:284px;font-size:19.5px;color:#333">Arduino</div>
<svg class="a" style="left:1819px;top:284px" width="12" height="8"><path d="M0 0H12L6 7Z" fill="#111"/></svg>
<div class="a" style="left:1859px;top:249px;width:1px;height:74px;background:#dcdfe3"></div>
<div class="a" style="left:1574px;top:323px;width:346px;height:1px;background:#dcdfe3"></div>
<svg class="a" style="left:1877px;top:276px" width="24" height="18"><g fill="#111"><rect x="0" y="0" width="4" height="4"/><rect x="6" y="0" width="18" height="4"/><rect x="0" y="7" width="4" height="4"/><rect x="6" y="7" width="18" height="4"/><rect x="0" y="14" width="4" height="4"/><rect x="6" y="14" width="18" height="4"/></g></svg>
<div class="a" style="left:1588px;top:337px;width:319px;height:42px;background:#fff;border:1px solid #dfe2e6"></div>
<div class="a" style="left:1599px;top:347px;font-size:19.2px;color:#3c4e63">potentiometer</div>
<svg class="a" style="left:1869px;top:346px" width="26" height="26"><circle cx="13" cy="13" r="11.5" fill="none" stroke="#d3d8de" stroke-width="2"/><path d="M9.5 9.5L16.5 16.5M16.5 9.5L9.5 16.5" stroke="#d3d8de" stroke-width="2.2"/></svg>
<div class="a" style="left:1901px;top:654px;width:17px;height:351px;background:#c1c1c1"></div>
<svg class="a" style="left:1903px;top:398px" width="12" height="8"><path d="M1 7H11L6 1Z" fill="#505050"/></svg>
<svg class="a" style="left:1903px;top:1011px" width="12" height="8"><path d="M1 1H11L6 7Z" fill="#a3a3a3"/></svg>
<svg class="a" style="left:1574px;top:249px" width="346" height="781" viewBox="1574 249 346 781"><g transform="translate(1614 392)"><path d="M1.5 0H104Q106 0 106 2V28L104 30V34Q104 36 102 36H1.5Q0 36 0 34.5V1.5Q0 0 1.5 0Z" fill="#2f6a9a"/><rect x="-4" y="18" width="21" height="14" rx="1" fill="#2a2c2e"/><rect x="-4" y="18" width="4" height="14" fill="#1e1f20"/><rect x="43" y="4" width="57" height="15" fill="#2b2d2f"/><rect x="44" y="6" width="55" height="11" fill="#3a3c3f"/><g fill="#ccc"><rect x="45.5" y="4.6" width="2" height="1"/><rect x="45.5" y="17.4" width="2" height="1"/><rect x="49.6" y="4.6" width="2" height="1"/><rect x="49.6" y="17.4" width="2" height="1"/><rect x="53.7" y="4.6" width="2" height="1"/><rect x="53.7" y="17.4" width="2" height="1"/><rect x="57.8" y="4.6" width="2" height="1"/><rect x="57.8" y="17.4" width="2" height="1"/><rect x="61.9" y="4.6" width="2" height="1"/><rect x="61.9" y="17.4" width="2" height="1"/><rect x="66.0" y="4.6" width="2" height="1"/><rect x="66.0" y="17.4" width="2" height="1"/><rect x="70.1" y="4.6" width="2" height="1"/><rect x="70.1" y="17.4" width="2" height="1"/><rect x="74.2" y="4.6" width="2" height="1"/><rect x="74.2" y="17.4" width="2" height="1"/><rect x="78.3" y="4.6" width="2" height="1"/><rect x="78.3" y="17.4" width="2" height="1"/><rect x="82.4" y="4.6" width="2" height="1"/><rect x="82.4" y="17.4" width="2" height="1"/><rect x="86.5" y="4.6" width="2" height="1"/><rect x="86.5" y="17.4" width="2" height="1"/><rect x="90.6" y="4.6" width="2" height="1"/><rect x="90.6" y="17.4" width="2" height="1"/><rect x="94.7" y="4.6" width="2" height="1"/><rect x="94.7" y="17.4" width="2" height="1"/><rect x="98.8" y="4.6" width="2" height="1"/><rect x="98.8" y="17.4" width="2" height="1"/></g><circle cx="49" cy="11.5" r="1.3" fill="#222"/><circle cx="94" cy="11.5" r="1.3" fill="#222"/><rect x="7" y="7" width="5" height="9" fill="#333"/><rect x="12" y="8" width="3" height="1.6" fill="#ddd"/><rect x="12" y="11" width="3" height="1.6" fill="#ddd"/><rect x="12" y="14" width="3" height="1.6" fill="#ddd"/><rect x="26" y="5" width="4" height="4" fill="#333"/><rect x="32" y="13" width="3" height="4" fill="#333"/><circle cx="26" cy="24" r="4.3" fill="#ddd"/><path d="M21.7 25H30.3A4.3 4.3 0 0 1 21.7 25Z" fill="#444"/><circle cx="37.5" cy="24" r="4.3" fill="#ddd"/><path d="M33.2 25H41.8A4.3 4.3 0 0 1 33.2 25Z" fill="#444"/><rect x="45" y="30" width="31" height="5" fill="#2d2d2d"/><rect x="80" y="30" width="24" height="5" fill="#2d2d2d"/><circle cx="104" cy="25" r="2.3" fill="#fff"/><circle cx="26" cy="32.5" r="2.3" fill="#fff"/><g fill="#8fb6d8"><rect x="50" y="24" width="0.9" height="5"/><rect x="54" y="24" width="0.9" height="5"/><rect x="58" y="24" width="0.9" height="5"/><rect x="62" y="24" width="0.9" height="5"/><rect x="66" y="24" width="0.9" height="5"/><rect x="84" y="24" width="0.9" height="5"/><rect x="88" y="24" width="0.9" height="5"/><rect x="92" y="24" width="0.9" height="5"/><rect x="96" y="24" width="0.9" height="5"/></g><rect x="66" y="21" width="12" height="1" fill="#9cc1e0"/><rect x="84" y="21" width="16" height="1" fill="#9cc1e0"/></g><path d="M1672.5 424L1681.5 444" stroke="#e33" stroke-width="1.2"/><path d="M1679.5 424L1689.5 444" stroke="#222" stroke-width="1.2"/><path d="M1691.5 424L1685.5 444" stroke="#2a2" stroke-width="1.2"/><circle cx="1685.5" cy="455.5" r="9.3" fill="#1e3446"/><circle cx="1685.5" cy="455.5" r="6.6" fill="#6b9dd0"/><path d="M1686.5 454.5L1690.5 450.5" stroke="#1a2c3c" stroke-width="1.8" stroke-linecap="round"/><g transform="translate(1761 392)"><path d="M1.5 0H104Q106 0 106 2V28L104 30V34Q104 36 102 36H1.5Q0 36 0 34.5V1.5Q0 0 1.5 0Z" fill="#2f6a9a"/><rect x="-4" y="18" width="21" height="14" rx="1" fill="#2a2c2e"/><rect x="-4" y="18" width="4" height="14" fill="#1e1f20"/><rect x="43" y="4" width="57" height="15" fill="#2b2d2f"/><rect x="44" y="6" width="55" height="11" fill="#3a3c3f"/><g fill="#ccc"><rect x="45.5" y="4.6" width="2" height="1"/><rect x="45.5" y="17.4" width="2" height="1"/><rect x="49.6" y="4.6" width="2" height="1"/><rect x="49.6" y="17.4" width="2" height="1"/><rect x="53.7" y="4.6" width="2" height="1"/><rect x="53.7" y="17.4" width="2" height="1"/><rect x="57.8" y="4.6" width="2" height="1"/><rect x="57.8" y="17.4" width="2" height="1"/><rect x="61.9" y="4.6" width="2" height="1"/><rect x="61.9" y="17.4" width="2" height="1"/><rect x="66.0" y="4.6" width="2" height="1"/><rect x="66.0" y="17.4" width="2" height="1"/><rect x="70.1" y="4.6" width="2" height="1"/><rect x="70.1" y="17.4" width="2" height="1"/><rect x="74.2" y="4.6" width="2" height="1"/><rect x="74.2" y="17.4" width="2" height="1"/><rect x="78.3" y="4.6" width="2" height="1"/><rect x="78.3" y="17.4" width="2" height="1"/><rect x="82.4" y="4.6" width="2" height="1"/><rect x="82.4" y="17.4" width="2" height="1"/><rect x="86.5" y="4.6" width="2" height="1"/><rect x="86.5" y="17.4" width="2" height="1"/><rect x="90.6" y="4.6" width="2" height="1"/><rect x="90.6" y="17.4" width="2" height="1"/><rect x="94.7" y="4.6" width="2" height="1"/><rect x="94.7" y="17.4" width="2" height="1"/><rect x="98.8" y="4.6" width="2" height="1"/><rect x="98.8" y="17.4" width="2" height="1"/></g><circle cx="49" cy="11.5" r="1.3" fill="#222"/><circle cx="94" cy="11.5" r="1.3" fill="#222"/><rect x="7" y="7" width="5" height="9" fill="#333"/><rect x="12" y="8" width="3" height="1.6" fill="#ddd"/><rect x="12" y="11" width="3" height="1.6" fill="#ddd"/><rect x="12" y="14" width="3" height="1.6" fill="#ddd"/><rect x="26" y="5" width="4" height="4" fill="#333"/><rect x="32" y="13" width="3" height="4" fill="#333"/><circle cx="26" cy="24" r="4.3" fill="#ddd"/><path d="M21.7 25H30.3A4.3 4.3 0 0 1 21.7 25Z" fill="#444"/><circle cx="37.5" cy="24" r="4.3" fill="#ddd"/><path d="M33.2 25H41.8A4.3 4.3 0 0 1 33.2 25Z" fill="#444"/><rect x="45" y="30" width="31" height="5" fill="#2d2d2d"/><rect x="80" y="30" width="24" height="5" fill="#2d2d2d"/><circle cx="104" cy="25" r="2.3" fill="#fff"/><circle cx="26" cy="32.5" r="2.3" fill="#fff"/><g fill="#8fb6d8"><rect x="50" y="24" width="0.9" height="5"/><rect x="54" y="24" width="0.9" height="5"/><rect x="58" y="24" width="0.9" height="5"/><rect x="62" y="24" width="0.9" height="5"/><rect x="66" y="24" width="0.9" height="5"/><rect x="84" y="24" width="0.9" height="5"/><rect x="88" y="24" width="0.9" height="5"/><rect x="92" y="24" width="0.9" height="5"/><rect x="96" y="24" width="0.9" height="5"/></g><rect x="66" y="21" width="12" height="1" fill="#9cc1e0"/><rect x="84" y="21" width="16" height="1" fill="#9cc1e0"/></g><path d="M1819.5 424L1828.5 444" stroke="#e33" stroke-width="1.2"/><path d="M1826.5 424L1836.5 444" stroke="#222" stroke-width="1.2"/><path d="M1838.5 424L1832.5 444" stroke="#2a2" stroke-width="1.2"/><circle cx="1832.5" cy="455.5" r="9.3" fill="#1e3446"/><circle cx="1832.5" cy="455.5" r="6.6" fill="#6b9dd0"/><path d="M1833.5 454.5L1837.5 450.5" stroke="#1a2c3c" stroke-width="1.8" stroke-linecap="round"/><g fill="none" stroke-linecap="round" stroke-linejoin="round"><path d="M1644.7 617.2H1620.8Q1616.6 617.2 1616.6 621.4V696.3H1620" stroke="#2b2b2b" stroke-width="1.4"/><path d="M1613.5 696.3L1668.7 631.5Q1671.5 628.2 1675.2 628.2H1687" stroke="#111" stroke-width="1.4"/><path d="M1649.9 616.6V630.2Q1649.9 634.7 1654.4 634.7H1687" stroke="#1aa01a" stroke-width="1.4"/><path d="M1685.5 640.5V696.3H1680.4" stroke="#e81b1b" stroke-width="1.4"/></g><path d="M1642.8 605Q1642.8 600.4 1647.3 600.4Q1651.8 600.4 1651.8 605V614H1642.8Z" fill="#7b1c1c"/><rect x="1683" y="657.4" width="5.8" height="15.6" rx="2.4" fill="#d4b07a"/><rect x="1683" y="663.5" width="5.8" height="1.3" fill="#e22"/><rect x="1683" y="666" width="5.8" height="1.3" fill="#222"/><rect x="1683" y="668.5" width="5.8" height="1.3" fill="#8b4a1a"/><rect x="1619.4" y="692.4" width="6" height="9.1" fill="#8a8a8a"/><rect x="1674.5" y="692.4" width="5" height="9.1" fill="#8a8a8a"/><circle cx="1649.3" cy="697" r="26.4" fill="#3a3a3a"/><circle cx="1649.3" cy="697" r="23.6" fill="#c2c2c2"/><path d="M1667 680L1670 676L1673 684ZM1667 714L1670 718L1673 710Z" fill="#333"/><text transform="translate(1650 684) rotate(90)" font-family="Liberation Sans" font-size="5" fill="#e0e0e0">COIN BATTERY</text><text transform="translate(1644 686) rotate(90)" font-family="Liberation Sans" font-size="5" fill="#e0e0e0">CR 2032</text><text transform="translate(1638 690) rotate(90)" font-family="Liberation Sans" font-size="5" fill="#e0e0e0">3.0V</text><path d="M1659.5 695V703M1655.5 699H1663.5" stroke="#d8d8d8" stroke-width="1"/><circle cx="1703.7" cy="634.1" r="13.9" fill="#213a4e"/><circle cx="1703.7" cy="634.1" r="9.8" fill="#6b9dd0"/><path d="M1703.5 634L1697.5 628" stroke="#1a2c3c" stroke-width="2.2" stroke-linecap="round"/><path d="M1810.5 606Q1811.8 604.5 1813 606L1813.5 620L1816.7 624V637.8H1804.9V624L1809.6 620Z" fill="#1f1f1f"/><rect x="1807.3" y="637.8" width="7.8" height="6" fill="#c6c6c6"/><rect x="1783.8" y="651" width="54.2" height="44" rx="2.5" fill="#1c1c1c"/><path d="M1786.3 651H1806L1803 654L1801 653L1798 657L1797 655L1784 667V653.5Q1784 651 1786.3 651Z" fill="#3bc5e8"/><rect x="1806.8" y="657" width="9" height="4.2" rx="2" fill="none" stroke="#3bc5e8" stroke-width="0.9"/><rect x="1802.2" y="664.5" width="1.4" height="2.4" rx="0.6" fill="#cfcfcf"/><rect x="1806.5" y="664.5" width="1.4" height="2.4" rx="0.6" fill="#cfcfcf"/><rect x="1810.9" y="664.5" width="1.4" height="2.4" rx="0.6" fill="#cfcfcf"/><rect x="1815.2" y="664.5" width="1.4" height="2.4" rx="0.6" fill="#cfcfcf"/><rect x="1819.6" y="664.5" width="1.4" height="2.4" rx="0.6" fill="#cfcfcf"/><rect x="1802.2" y="668.8" width="1.4" height="2.4" rx="0.6" fill="#cfcfcf"/><rect x="1806.5" y="668.8" width="1.4" height="2.4" rx="0.6" fill="#cfcfcf"/><rect x="1810.9" y="668.8" width="1.4" height="2.4" rx="0.6" fill="#cfcfcf"/><rect x="1815.2" y="668.8" width="1.4" height="2.4" rx="0.6" fill="#cfcfcf"/><rect x="1819.6" y="668.8" width="1.4" height="2.4" rx="0.6" fill="#cfcfcf"/><rect x="1802.2" y="673.1" width="1.4" height="2.4" rx="0.6" fill="#cfcfcf"/><rect x="1806.5" y="673.1" width="1.4" height="2.4" rx="0.6" fill="#cfcfcf"/><rect x="1810.9" y="673.1" width="1.4" height="2.4" rx="0.6" fill="#cfcfcf"/><rect x="1815.2" y="673.1" width="1.4" height="2.4" rx="0.6" fill="#cfcfcf"/><rect x="1819.6" y="673.1" width="1.4" height="2.4" rx="0.6" fill="#cfcfcf"/><rect x="1802.2" y="677.4" width="1.4" height="2.4" rx="0.6" fill="#cfcfcf"/><rect x="1806.5" y="677.4" width="1.4" height="2.4" rx="0.6" fill="#cfcfcf"/><rect x="1810.9" y="677.4" width="1.4" height="2.4" rx="0.6" fill="#cfcfcf"/><rect x="1815.2" y="677.4" width="1.4" height="2.4" rx="0.6" fill="#cfcfcf"/><rect x="1819.6" y="677.4" width="1.4" height="2.4" rx="0.6" fill="#cfcfcf"/><rect x="1802.2" y="681.7" width="1.4" height="2.4" rx="0.6" fill="#cfcfcf"/><rect x="1806.5" y="681.7" width="1.4" height="2.4" rx="0.6" fill="#cfcfcf"/><rect x="1810.9" y="681.7" width="1.4" height="2.4" rx="0.6" fill="#cfcfcf"/><rect x="1815.2" y="681.7" width="1.4" height="2.4" rx="0.6" fill="#cfcfcf"/><rect x="1819.6" y="681.7" width="1.4" height="2.4" rx="0.6" fill="#cfcfcf"/><rect x="1787.5" y="668.5" width="5.5" height="6" fill="#cfcfcf"/><circle cx="1790.2" cy="671.5" r="1.6" fill="#666"/><rect x="1829" y="668.5" width="5.5" height="6" fill="#cfcfcf"/><circle cx="1831.8" cy="671.5" r="1.6" fill="#666"/><rect x="1783.8" y="689" width="54.2" height="6.5" rx="1" fill="#c9b458"/><circle cx="1788" cy="687.6" r="2.5" fill="#f2ecd6"/><circle cx="1799" cy="687.6" r="2.5" fill="#f2ecd6"/><circle cx="1811" cy="687.6" r="2.5" fill="#f2ecd6"/><circle cx="1823" cy="687.6" r="2.5" fill="#f2ecd6"/><circle cx="1834.3" cy="687.6" r="2.5" fill="#f2ecd6"/><path d="M1788 695V707M1811 695V708" stroke="#3ab54a" stroke-width="0.9" fill="none"/><path d="M1835 696V699Q1835 700.5 1833.5 700.5H1787Q1785 700.5 1785 702V706M1816 700.5Q1814 702 1814 705V708" stroke="#333" stroke-width="0.8" fill="none"/><path d="M1823 695V701Q1823 703 1821 703H1791" stroke="#e33" stroke-width="0.8" fill="none"/><circle cx="1788" cy="711.1" r="6" fill="#213a4e"/><circle cx="1788" cy="711.1" r="4.3" fill="#6b9dd0"/><rect x="1810.7" y="707" width="4.2" height="6.8" rx="2.1" fill="#2aa02a"/><rect x="1645.8" y="945" width="3" height="17" rx="1.5" fill="#8e8e8e"/><rect x="1661.7" y="945" width="3" height="17" rx="1.5" fill="#8e8e8e"/><rect x="1677.7" y="945" width="3" height="17" rx="1.5" fill="#8e8e8e"/><circle cx="1663.4" cy="913.4" r="38.2" fill="#2c4457"/><circle cx="1663.4" cy="913.4" r="28.8" fill="#1b2f40"/><path d="M1691.4 913.4L1687.4 913.4M1691.3 915.8L1687.3 915.5M1691.0 918.3L1687.0 917.6M1690.4 920.6L1686.6 919.6M1689.7 923.0L1686.0 921.6M1688.8 925.2L1685.2 923.5M1687.6 927.4L1684.2 925.4M1686.3 929.5L1683.1 927.2M1684.8 931.4L1681.8 928.8M1683.2 933.2L1680.4 930.4M1681.4 934.8L1678.8 931.8M1679.5 936.3L1677.2 933.1M1677.4 937.6L1675.4 934.2M1675.2 938.8L1673.5 935.2M1673.0 939.7L1671.6 936.0M1670.6 940.4L1669.6 936.6M1668.3 941.0L1667.6 937.0M1665.8 941.3L1665.5 937.3M1663.4 941.4L1663.4 937.4M1661.0 941.3L1661.3 937.3M1658.5 941.0L1659.2 937.0M1656.2 940.4L1657.2 936.6M1653.8 939.7L1655.2 936.0M1651.6 938.8L1653.3 935.2M1649.4 937.6L1651.4 934.2M1647.3 936.3L1649.6 933.1M1645.4 934.8L1648.0 931.8M1643.6 933.2L1646.4 930.4M1642.0 931.4L1645.0 928.8M1640.5 929.5L1643.7 927.2M1639.2 927.4L1642.6 925.4M1638.0 925.2L1641.6 923.5M1637.1 923.0L1640.8 921.6M1636.4 920.6L1640.2 919.6M1635.8 918.3L1639.8 917.6M1635.5 915.8L1639.5 915.5M1635.4 913.4L1639.4 913.4M1635.5 911.0L1639.5 911.3M1635.8 908.5L1639.8 909.2M1636.4 906.2L1640.2 907.2M1637.1 903.8L1640.8 905.2M1638.0 901.6L1641.6 903.3M1639.2 899.4L1642.6 901.4M1640.5 897.3L1643.7 899.6M1642.0 895.4L1645.0 898.0M1643.6 893.6L1646.4 896.4M1645.4 892.0L1648.0 895.0M1647.3 890.5L1649.6 893.7M1649.4 889.2L1651.4 892.6M1651.6 888.0L1653.3 891.6M1653.8 887.1L1655.2 890.8M1656.2 886.4L1657.2 890.2M1658.5 885.8L1659.2 889.8M1661.0 885.5L1661.3 889.5M1663.4 885.4L1663.4 889.4M1665.8 885.5L1665.5 889.5M1668.3 885.8L1667.6 889.8M1670.6 886.4L1669.6 890.2M1673.0 887.1L1671.6 890.8M1675.2 888.0L1673.5 891.6M1677.4 889.2L1675.4 892.6M1679.5 890.5L1677.2 893.7M1681.4 892.0L1678.8 895.0M1683.2 893.6L1680.4 896.4M1684.8 895.4L1681.8 898.0M1686.3 897.3L1683.1 899.6M1687.6 899.4L1684.2 901.4M1688.8 901.6L1685.2 903.3M1689.7 903.8L1686.0 905.2M1690.4 906.2L1686.6 907.2M1691.0 908.5L1687.0 909.2M1691.3 911.0L1687.3 911.3" stroke="#4b7aa8" stroke-width="1"/><circle cx="1663.4" cy="913.4" r="23.9" fill="#6b9dd0"/><circle cx="1697.0" cy="913.4" r="1.6" fill="#5b8fbf"/><circle cx="1687.2" cy="889.6" r="1.6" fill="#5b8fbf"/><circle cx="1663.4" cy="879.8" r="1.6" fill="#5b8fbf"/><circle cx="1639.6" cy="889.6" r="1.6" fill="#5b8fbf"/><circle cx="1629.8" cy="913.4" r="1.6" fill="#5b8fbf"/><circle cx="1639.6" cy="937.2" r="1.6" fill="#5b8fbf"/><circle cx="1687.2" cy="937.2" r="1.6" fill="#5b8fbf"/><path d="M1656.5 917.5L1659.2 920.6L1644.5 934.5L1640.8 930.5Z" fill="#142a3b"/><circle cx="1657.9" cy="919" r="2" fill="#142a3b"/></svg>
<div class="lbl" style="left:1583.5px;top:468px;width:160px">Smoothing</div>
<div class="lbl" style="left:1730.5px;top:468px;width:160px">Read Analog</div>
<div class="lbl" style="left:1730.5px;top:485px;width:160px">Voltage</div>
<div class="lbl" style="left:1583.5px;top:723px;width:160px">LED Dimmer</div>
<div class="lbl" style="left:1730.8px;top:723px;width:160px">Analog</div>
<div class="lbl" style="left:1583.4px;top:979px;width:160px">Potentiometer</div>
<div class="sh" style="left:1590px;top:565px">Other Starters</div>
<div class="a" style="left:1590px;top:587px;width:294px;height:1px;background:#dcdfe3"></div>
<div class="sh" style="left:1590px;top:821px">Other Components</div>
<div class="a" style="left:1590px;top:843px;width:294px;height:1px;background:#dcdfe3"></div>
<div class="a" style="left:1562px;top:612px;width:21px;height:59px;background:#f6f6f8;border:1px solid #dcdfe3;border-right:none"></div>
<svg class="a" style="left:1566px;top:628px" width="12" height="26"><path d="M2 1L10 13L2 25" fill="none" stroke="#111" stroke-width="2.2"/></svg>
<div class="a" style="left:0;top:1030px;width:1920px;height:50px;background:#23231e"></div>
<svg class="a" style="left:0;top:1030px" width="60" height="50" viewBox="0 1030 60 50"><path fill="#fff" d="M20 1047.4L28 1046.3V1054.2H20ZM29 1046.1L40.3 1044.6V1054.2H29ZM20 1055.2H28V1063.6L20 1062.6ZM29 1055.2H40.3V1065.2L29 1063.8Z"/></svg>
<div class="a" style="left:60px;top:1030px;width:430px;height:50px;background:#f2f2f2;border-top:1px solid #dcdcdc"></div>
<svg class="a" style="left:74px;top:1044px" width="22" height="22"><circle cx="13" cy="9" r="7" fill="none" stroke="#222" stroke-width="1.6"/><path d="M8 14L1.5 20.5" stroke="#222" stroke-width="1.8"/></svg>
<div class="a" style="left:110px;top:1044px;font-size:18.4px;color:#222">Type here to search</div>
<svg class="a" style="left:508px;top:1044px" width="22" height="22"><circle cx="11" cy="11" r="8.5" fill="none" stroke="#fff" stroke-width="2.6"/></svg>
<svg class="a" style="left:569px;top:1044px" width="23" height="22"><g fill="none" stroke="#fff" stroke-width="1.6"><rect x="3" y="5" width="13" height="12"/><path d="M1 2H18M1 20H18M21 1V21"/></g></svg>
<svg class="a" style="left:629px;top:1043px" width="30" height="25" viewBox="0 0 30 25"><g fill="#fff"><path d="M7.5 0L0 4.8L7.5 9.6L15 4.8Z"/><path d="M22.5 0L15 4.8L22.5 9.6L30 4.8Z"/><path d="M0 14.4L7.5 19.2L15 14.4L7.5 9.6Z"/><path d="M15 14.4L22.5 19.2L30 14.4L22.5 9.6Z"/><path d="M7.5 20.8L15 25L22.5 20.8L15 16Z"/></g></svg>
<svg class="a" style="left:691px;top:1041px" width="28" height="28" viewBox="0 0 28 28"><path d="M8 2L26 6L20 27L2 23Z" fill="#a7d3ea"/><path d="M8 2L26 6L25 9L7.2 5Z" fill="#5aa6cf"/><path d="M20 27L26 6L27 8L21.5 27.5Z" fill="#6b8e9f"/><g stroke="#7fb5d1" stroke-width="0.7"><path d="M7 9L23 12.5M6 13L22 16.5M5 17L21 20.5"/></g></svg>
<svg class="a" style="left:752px;top:1040px" width="31" height="31" viewBox="0 0 31 31"><defs><linearGradient id="eg" x1="0" y1="0" x2="1" y2="1"><stop offset="0" stop-color="#3bd5a0"/><stop offset="0.5" stop-color="#1b9de2"/><stop offset="1" stop-color="#0c59a4"/></linearGradient></defs><circle cx="15.5" cy="15.5" r="15" fill="url(#eg)"/><path d="M9 19Q8 11 15 9.5Q22 9 23 15H12Q12 22 19 23Q24 23 27 20Q24 29 15 29Q9 28 9 19Z" fill="#0b3e7a" opacity="0.55"/><path d="M12 15H23Q23 10 17.5 9.5Q12 10 12 15Z" fill="#22221f" opacity="0.0"/></svg>
<svg class="a" style="left:814px;top:1040px" width="32" height="30" viewBox="0 0 32 30"><circle cx="17" cy="15" r="14.5" fill="#ed6c47"/><path d="M17 0.5A14.5 14.5 0 0 1 31.5 15H17Z" fill="#ff8f6b"/><path d="M17 15H31.5A14.5 14.5 0 0 1 17 29.5Z" fill="#d35230"/><rect x="0" y="6.5" width="17" height="17" rx="1.5" fill="#c43e1c"/><text x="8.5" y="20.5" text-anchor="middle" font-family="Liberation Sans" font-weight="bold" font-size="13" fill="#fff">P</text></svg>
<svg class="a" style="left:875px;top:1040px" width="33" height="30" viewBox="0 0 33 30"><rect x="7" y="0.5" width="25.5" height="29" rx="2" fill="#41a5ee"/><rect x="7" y="8" width="25.5" height="7.5" fill="#2b7cd3"/><rect x="7" y="15.5" width="25.5" height="7" fill="#185abd"/><rect x="7" y="22.5" width="25.5" height="7" rx="2" fill="#103f91"/><rect x="0" y="6.5" width="17" height="17" rx="1.5" fill="#185abd"/><text x="8.5" y="20.5" text-anchor="middle" font-family="Liberation Sans" font-weight="bold" font-size="12.5" fill="#fff">W</text></svg>
<svg class="a" style="left:937px;top:1042px" width="33" height="27" viewBox="0 0 33 27"><path d="M0 2Q0 0 2 0H11L14 3H31Q33 3 33 5V25Q33 27 31 27H2Q0 27 0 25Z" fill="#e8a92b"/><path d="M0 8H33V25Q33 27 31 27H2Q0 27 0 25Z" fill="#ffc73d"/><rect x="10" y="14" width="13" height="7" fill="#2a7fc9"/><rect x="10" y="14" width="13" height="2" fill="#5ab0ef"/></svg>
<svg class="a" style="left:1001px;top:1040px" width="30" height="30" viewBox="0 0 30 30"><circle cx="15" cy="15" r="14.5" fill="#db4437"/><path d="M15 15L2.44 7.75A14.5 14.5 0 0 0 15 29.5Z" fill="#0f9d58"/><path d="M15 15L15 29.5A14.5 14.5 0 0 0 27.56 7.75Z" fill="#ffcd40"/><path d="M15 15L2.44 7.75A14.5 14.5 0 0 1 27.56 7.75Z" fill="#db4437"/><path d="M15 8.5H27.56A14.5 14.5 0 0 1 15 29.5L20.6 18.3Z" fill="#ffcd40"/><path d="M9.4 18.3L2.44 7.75A14.5 14.5 0 0 0 15 29.5L20.6 18.3Z" fill="#0f9d58"/><circle cx="15" cy="15" r="6.8" fill="#fff"/><circle cx="15" cy="15" r="5.3" fill="#4285f4"/></svg>
<svg class="a" style="left:1063px;top:1040px" width="30" height="30" viewBox="0 0 30 30"><circle cx="15.5" cy="14.5" r="13" fill="#fff"/><path d="M1.5 28.5L3.5 21L9 26Z" fill="#fff"/><circle cx="15.5" cy="14.5" r="10.8" fill="#25d366"/><path d="M4.5 25L6 20.5L9.5 23.5Z" fill="#25d366"/><path d="M10.5 9.5Q11.5 8 13 8.8L14.5 12Q14 13.5 13.5 14Q15 17 18 18.5Q19 17.8 19.8 17.2L22.3 18.5Q22.3 20.5 20.3 21.3Q16 21.3 13 18.5Q10 15.5 10.5 9.5Z" fill="#fff"/></svg>
<div class="a" style="left:1110px;top:1030px;width:60px;height:50px;background:#3b3b37"></div>
<div class="a" style="left:1110px;top:1077px;width:60px;height:3px;background:#7ab8ea"></div>
<svg class="a" style="left:1126px;top:1040px" width="30" height="30" viewBox="0 0 30 30"><circle cx="15" cy="15" r="14.5" fill="#db4437"/><path d="M15 15L2.44 7.75A14.5 14.5 0 0 0 15 29.5Z" fill="#0f9d58"/><path d="M15 15L15 29.5A14.5 14.5 0 0 0 27.56 7.75Z" fill="#ffcd40"/><path d="M15 15L2.44 7.75A14.5 14.5 0 0 1 27.56 7.75Z" fill="#db4437"/><path d="M15 8.5H27.56A14.5 14.5 0 0 1 15 29.5L20.6 18.3Z" fill="#ffcd40"/><path d="M9.4 18.3L2.44 7.75A14.5 14.5 0 0 0 15 29.5L20.6 18.3Z" fill="#0f9d58"/><circle cx="15" cy="15" r="6.8" fill="#fff"/><circle cx="15" cy="15" r="5.3" fill="#4285f4"/></svg>
<div class="a" style="left:1138px;top:1051px;width:19px;height:19px;border-radius:50%;background:#c0390f;color:#fff;font-size:11px;font-weight:bold;text-align:center;line-height:19px;border:1px solid #22221f">P</div>
<div class="a" style="left:1170px;top:1030px;width:1px;height:50px;background:#3a3a36"></div>
<svg class="a" style="left:1523px;top:1042px" width="31" height="31" viewBox="0 0 31 31"><circle cx="14" cy="14" r="13" fill="#fff"/><circle cx="14" cy="14" r="11" fill="#1d8fe1"/><path d="M10 11Q10 7 14 7Q18 7 18 10.5Q18 13 15.3 14Q14.5 14.5 14.5 16V17" fill="none" stroke="#fff" stroke-width="2.4"/><circle cx="14.5" cy="20.5" r="1.5" fill="#fff"/><circle cx="23.5" cy="23.5" r="6" fill="#f0a30a"/><rect x="22.7" y="21.5" width="1.7" height="5.5" fill="#fff"/><circle cx="23.5" cy="19.6" r="0.9" fill="#fff"/></svg>
<svg class="a" style="left:1564px;top:1051px" width="17" height="10"><path d="M1 9L8.5 1.5L16 9" fill="none" stroke="#fff" stroke-width="1.4"/></svg>
<svg class="a" style="left:1592px;top:1048px" width="22" height="18"><rect x="3" y="4" width="17" height="11" fill="none" stroke="#fff" stroke-width="1.4"/><rect x="5" y="6" width="13" height="7" fill="#fff"/><rect x="0" y="7" width="3" height="5" fill="#fff"/><path d="M6 1L8 4" stroke="#fff"/></svg>
<svg class="a" style="left:1621px;top:1046px" width="22" height="22"><path d="M2 8H6L11 3V19L6 14H2Z" fill="none" stroke="#fff" stroke-width="1.4"/><path d="M14 8Q16 11 14 14M16.5 5.5Q20 11 16.5 16.5" fill="none" stroke="#fff" stroke-width="1.4"/></svg>
<svg class="a" style="left:1654px;top:1045px" width="19" height="23"><path d="M1 22Q1 8 17 5M5 22Q5 12 17 9M9 22Q9 15 17 13M13 22Q13 18 17 17" fill="none" stroke="#fff" stroke-width="1.3"/><rect x="1" y="20" width="16" height="2" fill="#fff" opacity="0"/></svg>
<svg class="a" style="left:1682px;top:1045px" width="31" height="24"><rect x="1" y="3" width="29" height="18" fill="none" stroke="#fff" stroke-width="1.3"/><g fill="#fff"><rect x="4.0" y="7" width="2" height="1.5"/><rect x="4.0" y="11" width="2" height="1.5"/><rect x="7.4" y="7" width="2" height="1.5"/><rect x="7.4" y="11" width="2" height="1.5"/><rect x="10.8" y="7" width="2" height="1.5"/><rect x="10.8" y="11" width="2" height="1.5"/><rect x="14.2" y="7" width="2" height="1.5"/><rect x="14.2" y="11" width="2" height="1.5"/><rect x="17.6" y="7" width="2" height="1.5"/><rect x="17.6" y="11" width="2" height="1.5"/><rect x="21.0" y="7" width="2" height="1.5"/><rect x="21.0" y="11" width="2" height="1.5"/><rect x="24.4" y="7" width="2" height="1.5"/><rect x="24.4" y="11" width="2" height="1.5"/><rect x="7" y="15" width="17" height="1.6"/></g></svg>
<div class="a" style="left:1725px;top:1047px;font-size:15px;color:#fff">ENG</div>
<div class="a" style="left:1767px;top:1035px;width:80px;text-align:center;font-size:15px;color:#fff">10:08</div>
<div class="a" style="left:1767px;top:1057px;width:80px;text-align:center;font-size:15px;color:#fff">06-01-2021</div>
<svg class="a" style="left:1868px;top:1045px" width="22" height="22"><path d="M1 1H20.5V14.5H11L7.5 18V14.5H1Z" fill="none" stroke="#fff" stroke-width="1.4"/></svg>
<div class="a" style="left:1912px;top:1030px;width:1px;height:50px;background:#55554f"></div>
</body></html>
